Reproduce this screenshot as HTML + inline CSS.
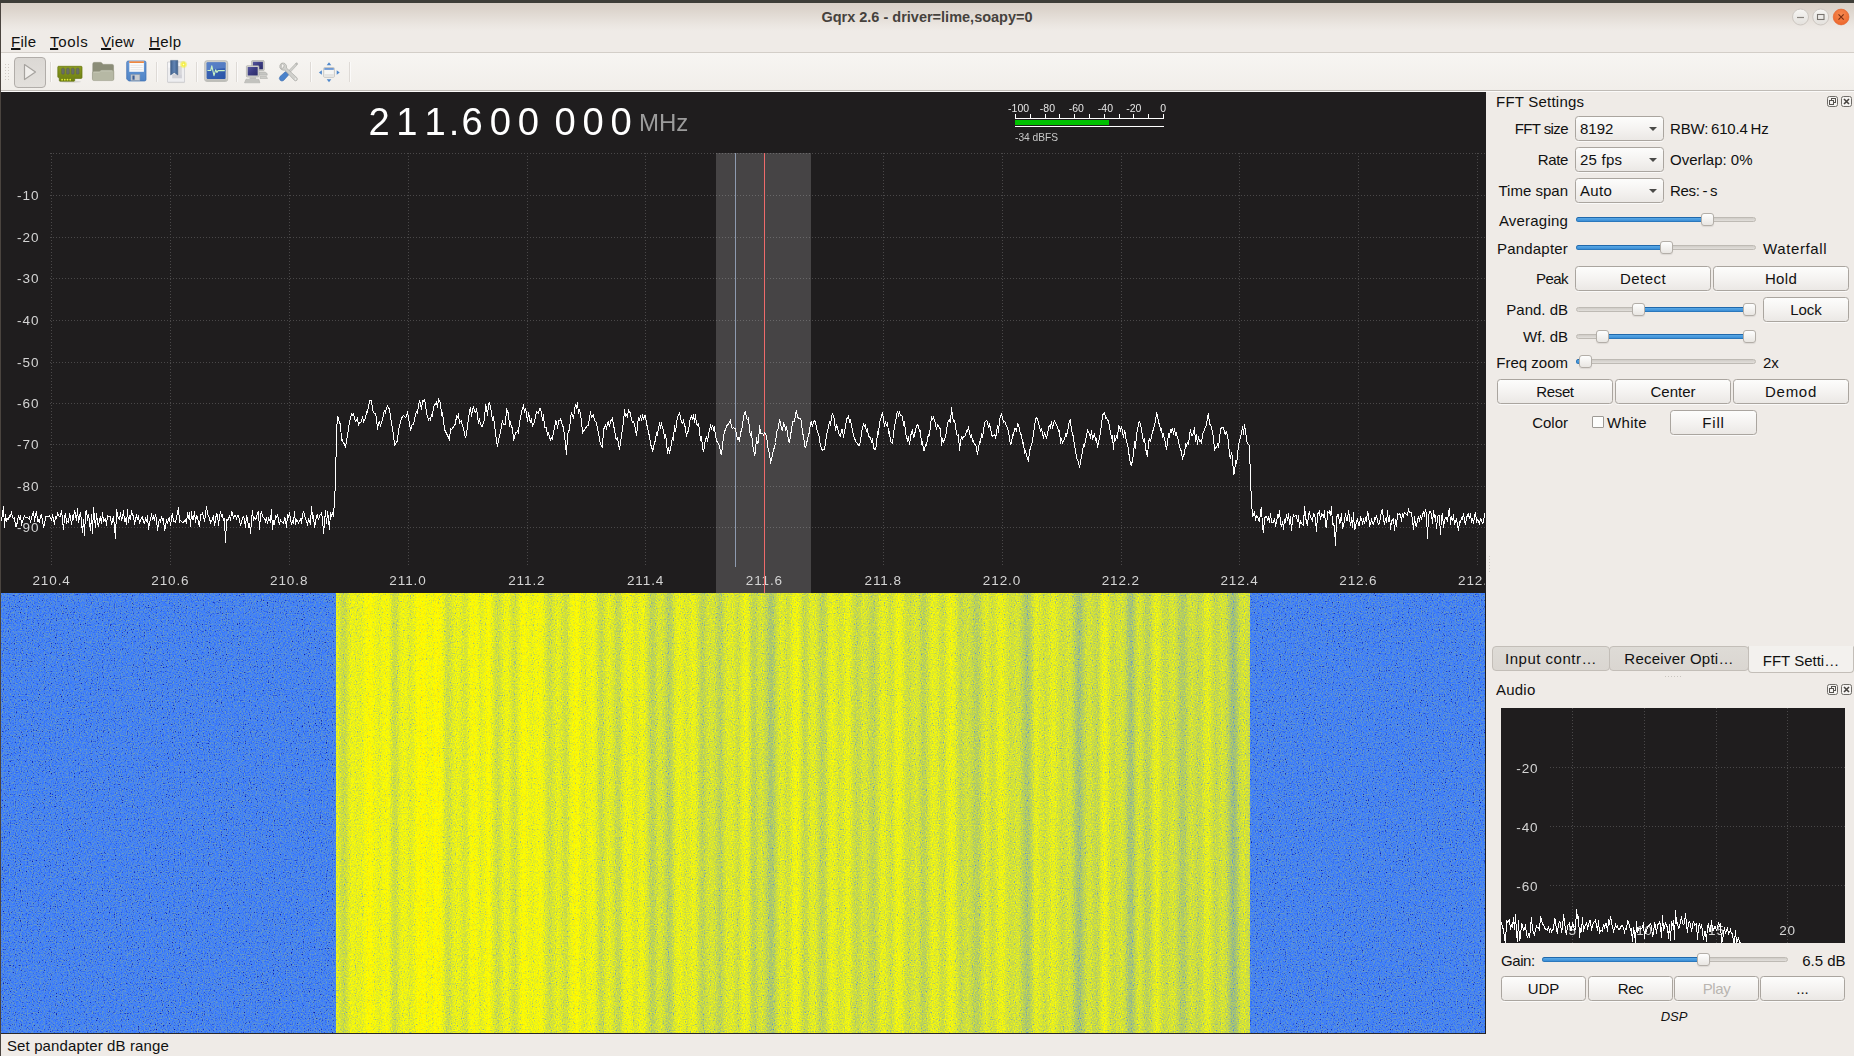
<!DOCTYPE html>
<html><head><meta charset="utf-8"><title>Gqrx 2.6 - driver=lime,soapy=0</title>
<style>
*{box-sizing:border-box;margin:0;padding:0}
html,body{width:1854px;height:1056px;overflow:hidden}
body{position:relative;background:#efebe7;font-family:"Liberation Sans",sans-serif;font-size:15px;color:#111}
.abs{position:absolute}
.t{position:absolute;white-space:nowrap;line-height:18px;height:18px}
.r{text-align:right}
.c{text-align:center}
#topstrip{left:0;top:0;width:1854px;height:3px;background:#3d3d38}
#leftedge{left:0;top:3px;width:1px;height:1053px;background:#4a443f}
#titlebar{left:1px;top:3px;width:1853px;height:28px;background:linear-gradient(#d9d0c7 0px,#dcd4cc 6px,#ebe6e1 22px,#efebe7 28px)}
#title{left:0;top:8px;width:1854px;text-align:center;font-weight:bold;font-size:14.5px;color:#46423d;line-height:18px}
#menubar{left:1px;top:31px;width:1853px;height:21px;background:#efebe7}
.menu{top:33px;font-size:15px;line-height:18px;color:#111}
.menu u{text-decoration:underline;text-decoration-thickness:1.5px;text-underline-offset:1px}
#mline{left:1px;top:52px;width:1853px;height:1px;background:#d3cec8}
#toolbar{left:1px;top:53px;width:1853px;height:37px;background:linear-gradient(#f7f5f2,#f1eeea)}
#tline1{left:1px;top:90px;width:1853px;height:1px;background:#bfbbb6}
#tline2{left:1px;top:91px;width:1853px;height:1px;background:#fbfaf9}
.sep{position:absolute;top:62px;width:1px;height:20px;background:#dedad6;border-right:1px solid #fbfaf9;box-sizing:content-box}
#playbtn{left:14px;top:57px;width:32px;height:31px;border:1px solid #b1ada9;border-radius:4px;background:linear-gradient(#dbd8d4,#e3e0dc)}
#plot{left:1px;top:92px;width:1485px;height:501px;background:#1f1d1e}
#plot svg{will-change:transform}
#wf{left:1px;top:593px;width:1485px;height:440px;background:#4080ee;overflow:hidden}
#wfline{left:1px;top:1033px;width:1485px;height:1px;background:#2a2827}
#dockedge{left:1485px;top:92px;width:1px;height:942px;background:#1f1d1e}
#status{left:7px;top:1037px;font-size:15px;letter-spacing:.12px}
.btn{position:absolute;margin-top:-1px;height:25px;border:1px solid #aaa59f;border-radius:3.5px;background:linear-gradient(#fdfdfc,#f4f2f0 55%,#ebe8e5);text-align:center;line-height:23px;font-size:15px;color:#111;box-shadow:0 1px 0 rgba(255,255,255,.7)}
.btn.dis{color:#b9b5b0}
.combo{position:absolute;height:25px;width:89px;border:1px solid #aaa59f;border-radius:3.5px;background:linear-gradient(#fdfdfc,#f4f2f0 55%,#ebe8e5);line-height:24px;font-size:15px;padding-left:4px;box-shadow:0 1px 0 rgba(255,255,255,.7)}
.combo:after{content:"";position:absolute;right:6px;top:10px;border-left:4px solid transparent;border-right:4px solid transparent;border-top:4.5px solid #4a4a48}
.groove{position:absolute;height:5px;border-radius:3px;background:linear-gradient(#d0ccc7,#e2dfdb);border:1px solid #bebab4}
.fill{position:absolute;height:5px;border-radius:3px;background:linear-gradient(#5aa9e6,#3b8ed6);border:1px solid #2b78bc;border-top-color:#2068ab}
.knob{position:absolute;width:13px;height:13px;border-radius:3px;border:1px solid #b3aea8;background:linear-gradient(#fefefe,#e9e6e2);box-shadow:0 1px 1px rgba(0,0,0,.08)}
.tab{position:absolute;height:25px;border:1px solid #c3beb8;border-radius:4px 4px 4px 4px;background:linear-gradient(#dedbd6,#dad6d1);text-align:center;line-height:24px;font-size:15px}
.tab.act{background:#f3f1ee;height:27px;border-top-color:#f3f1ee;border-radius:0 0 4px 4px}
.dockico{position:absolute;width:11px;height:11px}
</style></head><body>
<div id="topstrip" class="abs"></div>
<div id="titlebar" class="abs"></div>
<div id="title" class="abs">Gqrx 2.6 - driver=lime,soapy=0</div>
<!-- window buttons -->
<svg class="abs" style="left:1786px;top:5px" width="66" height="24" viewBox="0 0 66 24">
 <defs>
  <linearGradient id="wbg" x1="0" y1="0" x2="0" y2="1"><stop offset="0" stop-color="#f7f6f4"/><stop offset="1" stop-color="#e3e0dc"/></linearGradient>
  <radialGradient id="wbr" cx="0.5" cy="0.35" r="0.7"><stop offset="0" stop-color="#f68a52"/><stop offset="1" stop-color="#ec6428"/></radialGradient>
 </defs>
 <circle cx="14.5" cy="12" r="8" fill="url(#wbg)" stroke="#cdc7c1" stroke-width="1"/>
 <path d="M11 12.5h7" stroke="#8a8680" stroke-width="1.2"/>
 <circle cx="34.7" cy="12" r="8" fill="url(#wbg)" stroke="#cdc7c1" stroke-width="1"/>
 <rect x="31.5" y="9.5" width="6.5" height="5" fill="none" stroke="#77736e" stroke-width="1.1"/>
 <circle cx="55.1" cy="12" r="7.9" fill="url(#wbr)" stroke="#e0602a" stroke-width=".6"/>
 <path d="M52.5 9.4l5.2 5.2M57.7 9.4l-5.2 5.2" stroke="#7a2e12" stroke-width="1.2"/>
</svg>
<div id="menubar" class="abs"></div>
<div class="t menu" style="left:11px;letter-spacing:.3px"><u>F</u>ile</div>
<div class="t menu" style="left:50px;letter-spacing:.7px"><u>T</u>ools</div>
<div class="t menu" style="left:101px;letter-spacing:.3px"><u>V</u>iew</div>
<div class="t menu" style="left:149px;letter-spacing:.4px"><u>H</u>elp</div>
<div id="mline" class="abs"></div>
<div id="toolbar" class="abs"></div>
<div id="tline1" class="abs"></div><div id="tline2" class="abs"></div>
<!-- toolbar handle -->
<svg class="abs" style="left:5px;top:63px" width="6" height="20" viewBox="0 0 6 20"><g fill="#cfcac4"><rect x="0" y="1" width="1" height="1"/><rect x="3" y="1" width="1" height="1"/><rect x="0" y="4" width="1" height="1"/><rect x="3" y="4" width="1" height="1"/><rect x="0" y="7" width="1" height="1"/><rect x="3" y="7" width="1" height="1"/><rect x="0" y="10" width="1" height="1"/><rect x="3" y="10" width="1" height="1"/><rect x="0" y="13" width="1" height="1"/><rect x="3" y="13" width="1" height="1"/><rect x="0" y="16" width="1" height="1"/><rect x="3" y="16" width="1" height="1"/></g></svg>
<div id="playbtn" class="abs"></div>
<svg class="abs" style="left:22px;top:62px" width="18" height="20" viewBox="0 0 18 20"><path d="M2.5 2.5L13.5 10L2.5 17.5Z" fill="#f1efec" stroke="#a6a39f" stroke-width="1.2" stroke-linejoin="round"/></svg>
<div class="sep" style="left:50px"></div>
<div class="sep" style="left:156px"></div>
<div class="sep" style="left:196px"></div>
<div class="sep" style="left:236px"></div>
<div class="sep" style="left:310px"></div>
<div class="sep" style="left:349px"></div>
<!-- ICONS -->
<svg class="abs" style="left:0;top:53px" width="360" height="37" viewBox="0 53 360 37">
<defs>
 <linearGradient id="igreen" x1="0" y1="0" x2="0" y2="1"><stop offset="0" stop-color="#8a9a22"/><stop offset="1" stop-color="#6d7d10"/></linearGradient>
 <linearGradient id="iblue" x1="0" y1="0" x2="0" y2="1"><stop offset="0" stop-color="#6a9bd8"/><stop offset="1" stop-color="#4f84c6"/></linearGradient>
 <linearGradient id="iscr" x1="0" y1="0" x2="1" y2="1"><stop offset="0" stop-color="#3f68b8"/><stop offset="1" stop-color="#2a55a8"/></linearGradient>
 <linearGradient id="ipur" x1="0" y1="0" x2="1" y2="1"><stop offset="0" stop-color="#56569c"/><stop offset=".5" stop-color="#3a3a80"/><stop offset="1" stop-color="#2c2c68"/></linearGradient>
 <linearGradient id="irib" x1="0" y1="0" x2="1" y2="0"><stop offset="0" stop-color="#40608c"/><stop offset=".5" stop-color="#6184b4"/><stop offset="1" stop-color="#40608c"/></linearGradient>
 <radialGradient id="iglow"><stop offset="0" stop-color="#ffffd0"/><stop offset=".35" stop-color="#f6f03c"/><stop offset="1" stop-color="#f2ee30" stop-opacity=".25"/></radialGradient>
 <filter id="isoft" x="-10%" y="-10%" width="120%" height="120%"><feGaussianBlur stdDeviation="0.35"/></filter>
</defs>
<g filter="url(#isoft)">
<!-- 1 memory card -->
<ellipse cx="70" cy="81.800" rx="11" ry="1" fill="#000" opacity=".10"/>
<path d="M58.600 66.300h22.600q.8 0 .8.800v10.500q0 .8-.8.800h-6.500v2q0 .8-.8.800h-13.800q-.8 0-.8-.8v-2.800h-.7q-.8 0-.8-.8v-9.700q0-.8.800-.8z" fill="url(#igreen)" stroke="#63720c" stroke-width=".7"/>
<g fill="#6a6e66" stroke="#555a50" stroke-width=".4"><rect x="61.600" y="68.200" width="2.800" height="6" rx="1"/><rect x="66.500" y="68.200" width="2.800" height="6" rx="1"/><rect x="71.400" y="68.200" width="2.800" height="6" rx="1"/><rect x="76.300" y="68.200" width="2.800" height="6" rx="1"/></g>
<g fill="#e6f23a"><circle cx="62.100" cy="79.700" r=".85"/><circle cx="64.800" cy="79.700" r=".85"/><circle cx="67.500" cy="79.700" r=".85"/><circle cx="70.200" cy="79.700" r=".85"/></g>
<!-- 2 folder -->
<path d="M92.600 64q0-1.800 1.600-1.800h6.300q1 0 1.600.9l.8 1.100h9.300q1.500 0 1.500 1.600v12.700q0 1.600-1.500 1.600h-18q-1.600 0-1.600-1.600z" fill="#8b8d78" stroke="#75776450" stroke-width=".6"/>
<path d="M92.400 73q0-1.500 1.500-1.500h5.500q1 0 1.500-.7l.5-.6h10.900q1.500 0 1.500 1.500v7.300q0 1.600-1.500 1.600h-18.400q-1.500 0-1.500-1.600z" fill="#b6b8a4" stroke="#9a9c88" stroke-width=".5"/>
<path d="M93.500 72.200h5.800l1.600-1.300h11" stroke="#cfd1bf" stroke-width=".7" fill="none"/>
<!-- 3 floppy -->
<path d="M126.700 62.500q0-1.500 1.500-1.500h16.300q1.500 0 1.500 1.500v17q0 1.500-1.500 1.500h-15.800l-2-2z" fill="url(#iblue)" stroke="#3f6fb0" stroke-width=".7"/>
<rect x="129.300" y="61.400" width="14.600" height="10.400" fill="#fafafa"/>
<rect x="129.300" y="61.400" width="14.600" height="1.500" fill="#ee7a28"/>
<path d="M130.500 65.300h12.200M130.500 67.500h12.200M130.500 69.700h12.200" stroke="#dcdcdc" stroke-width=".6"/>
<rect x="130.900" y="74.600" width="9" height="5.900" fill="#c9ccd0" stroke="#8e99a8" stroke-width=".5"/>
<rect x="132.400" y="75.500" width="2.200" height="4.200" fill="#3d5f96"/>
<!-- 4 bookmark doc -->
<rect x="168" y="82.100" width="16.500" height="1" fill="#000" opacity=".10"/>
<path d="M167.500 62h17v20.200h-17z" fill="#eeeef0" stroke="#c6c6ca" stroke-width=".7"/>
<path d="M168.200 62.700h15.600v5h-15.600z" fill="#f8f8fa"/>
<rect x="172.200" y="74.200" width="9.700" height="4.100" fill="#d0d0d6"/>
<rect x="177.800" y="66" width="4" height="8" fill="#d6d6da"/>
<path d="M170.600 60.400h7.200v14.600l-3.600-2.600-3.600 2.600z" fill="url(#irib)" stroke="#38577f" stroke-width=".5"/>
<circle cx="183.500" cy="64.500" r="3.700" fill="url(#iglow)"/>
<!-- 5 monitor -->
<rect x="204.700" y="60.700" width="23" height="20.800" rx="2.200" fill="#d3d3cf" stroke="#b0b0ac" stroke-width=".7"/>
<rect x="205.600" y="79.200" width="21.200" height="1.800" rx=".8" fill="#bdbdb8"/>
<rect x="206.600" y="62.300" width="19" height="16.600" rx="1" fill="url(#iscr)"/>
<path d="M206.600 62.800q0-.5.500-.5h18q.5 0 .5.500v5.500q-9-.5-19 3z" fill="#6f95d4" opacity=".55"/>
<path d="M207.500 70.500h3.200l1.100-4.600 2.200 9.800 1.700-6 1.200 2.800 1.200-1.900h6.700" fill="none" stroke="#c9f2c4" stroke-width="1.100" stroke-linejoin="round"/>
<!-- 6 network computers -->
<rect x="251.600" y="60.600" width="12.600" height="10" rx=".8" fill="#cfcfcb" stroke="#a4a4a0" stroke-width=".6"/>
<rect x="252.900" y="61.800" width="10" height="7.500" fill="url(#ipur)"/>
<path d="M259.500 72h5.500l2.200 1.600v1.600h-7.700z" fill="#c6c6c2" stroke="#a4a4a0" stroke-width=".5"/>
<path d="M260 76.500h6.500l1 2h-7.500z" fill="#cdcdc9" stroke="#a9a9a5" stroke-width=".5"/>
<rect x="246.400" y="65.700" width="12.600" height="11.300" rx=".8" fill="#d6d6d2" stroke="#a4a4a0" stroke-width=".6"/>
<rect x="247.700" y="67" width="10" height="8.500" fill="url(#ipur)"/>
<path d="M249.500 77.200h6.500v1.700h-6.500z" fill="#bdbdb9"/>
<path d="M246 79.200h12.700l1.200 3.600h-15.400z" fill="#c9c9c5" stroke="#a4a4a0" stroke-width=".5"/>
<path d="M245.800 81h13.600" stroke="#b2b2ae" stroke-width=".6"/>
<!-- 7 tools -->
<path d="M296 63.200l1.400 1.400-9.800 10.500-1.600-1.600z" fill="#cfcfcb" stroke="#a0a09c" stroke-width=".5"/>
<path d="M296.800 62.300l1.200 1.200-1.200 1.800-1.800-1.800z" fill="#b8b8b4"/>
<path d="M280 76.500l5-4.500q.8-.6 1.500 0l1.800 1.800q.6.700 0 1.500l-4.500 5q-1.900 1.600-3.600 0-1.700-1.700-.2-3.800z" fill="#4b82ca" stroke="#3869ae" stroke-width=".6"/>
<path d="M281.400 63.300q-2.200 1.700-1.600 4.200.9 2.700 3.900 2.700l.9-.2 9.700 10.300q1.300 1.100 2.600 0 1.100-1.300 0-2.600l-10.300-9.600q.5-3-1.600-4.500-1.600-1-3.300-.5l2.400 2.500-.7 2.200-2.200.7z" fill="#d0d0cc" stroke="#a2a29e" stroke-width=".6"/>
<circle cx="295.500" cy="79" r=".8" fill="#f2f2f0"/>
<!-- 8 fullscreen -->
<rect x="323.700" y="67.500" width="10.700" height="9.800" rx="1" fill="#f6f6f4" stroke="#b4b4b0" stroke-width=".7"/>
<rect x="324.300" y="68" width="9.500" height="1.900" fill="#6f9ad4"/>
<path d="M324.300 74h9.500v2.700h-9.500z" fill="#e4e4e2"/>
<g fill="#4f88cc"><path d="M329 62.200l2.300 3h-4.600z"/><path d="M329 82.200l2.300-3h-4.600z"/><path d="M318.900 72.500l3-2.300v4.600z"/><path d="M339.700 72.500l-3-2.300v4.600z"/></g>
</g>
</svg>
<div id="leftedge" class="abs"></div>
<div id="plot" class="abs"><svg class="abs" style="left:0;top:0" width="1485" height="501" viewBox="0 0 1485 501"><g stroke="#4a4849" stroke-width="1" stroke-dasharray="1 2" shape-rendering="crispEdges"><path d="M50.5 61V473"/><path d="M169.5 61V473"/><path d="M288.5 61V473"/><path d="M407.5 61V473"/><path d="M526.5 61V473"/><path d="M644.5 61V473"/><path d="M763.5 61V473"/><path d="M882.5 61V473"/><path d="M1001.5 61V473"/><path d="M1120.5 61V473"/><path d="M1238.5 61V473"/><path d="M1357.5 61V473"/><path d="M1476.5 61V473"/><path d="M49 61.5H1485"/><path d="M49 103.5H1485"/><path d="M49 145.5H1485"/><path d="M49 186.5H1485"/><path d="M49 228.5H1485"/><path d="M49 270.5H1485"/><path d="M49 311.5H1485"/><path d="M49 352.5H1485"/><path d="M49 394.5H1485"/><path d="M49 435.5H1485"/></g><rect x="715" y="61" width="95" height="440" fill="#ffffff" fill-opacity="0.178"/><g fill="#d4d4d4" font-family="Liberation Sans,sans-serif" font-size="13.5px" letter-spacing="0.9px"><text x="38.3" y="108.4" text-anchor="end">-10</text><text x="38.3" y="150.4" text-anchor="end">-20</text><text x="38.3" y="191.4" text-anchor="end">-30</text><text x="38.3" y="233.4" text-anchor="end">-40</text><text x="38.3" y="275.4" text-anchor="end">-50</text><text x="38.3" y="316.4" text-anchor="end">-60</text><text x="38.3" y="357.4" text-anchor="end">-70</text><text x="38.3" y="399.4" text-anchor="end">-80</text><text x="38.3" y="440.4" text-anchor="end">-90</text><text x="50.6" y="492.9" text-anchor="middle">210.4</text><text x="169.4" y="492.9" text-anchor="middle">210.6</text><text x="288.2" y="492.9" text-anchor="middle">210.8</text><text x="407" y="492.9" text-anchor="middle">211.0</text><text x="525.8" y="492.9" text-anchor="middle">211.2</text><text x="644.6" y="492.9" text-anchor="middle">211.4</text><text x="763.4" y="492.9" text-anchor="middle">211.6</text><text x="882.2" y="492.9" text-anchor="middle">211.8</text><text x="1001" y="492.9" text-anchor="middle">212.0</text><text x="1119.8" y="492.9" text-anchor="middle">212.2</text><text x="1238.6" y="492.9" text-anchor="middle">212.4</text><text x="1357.4" y="492.9" text-anchor="middle">212.6</text><text x="1476.2" y="492.9" text-anchor="middle">212.8</text></g><path d="M734.5 61V475" stroke="#8e9bb0" stroke-width="1" shape-rendering="crispEdges"/><path d="M763.5 61V501" stroke="#ee6b6b" stroke-width="1" shape-rendering="crispEdges"/><polyline fill="none" stroke="#ffffff" stroke-width="1" shape-rendering="crispEdges" points="0.5,428.6 1.5,421.1 2.5,414.3 3.5,436.2 4.5,421.7 5.5,430.4 6.5,426.4 7.5,427.0 8.5,424.0 9.5,424.5 10.5,419.2 11.5,425.6 12.5,426.3 13.5,426.0 14.5,434.6 15.5,434.2 16.5,429.0 17.5,423.0 18.5,427.9 19.5,423.3 20.5,432.4 21.5,430.3 22.5,425.4 23.5,424.1 24.5,425.9 25.5,425.7 26.5,425.6 27.5,426.5 28.5,425.1 29.5,431.0 30.5,424.4 31.5,423.0 32.5,418.9 33.5,429.5 34.5,422.9 35.5,419.2 36.5,429.3 37.5,428.2 38.5,430.9 39.5,423.8 40.5,422.9 41.5,429.2 42.5,435.1 43.5,433.3 44.5,424.9 45.5,424.4 46.5,424.1 47.5,424.4 48.5,423.5 49.5,426.3 50.5,428.0 51.5,423.5 52.5,426.5 53.5,432.9 54.5,423.8 55.5,426.9 56.5,420.4 57.5,423.9 58.5,424.2 59.5,424.8 60.5,417.9 61.5,427.4 62.5,438.1 63.5,425.3 64.5,421.4 65.5,430.8 66.5,429.4 67.5,430.2 68.5,422.2 69.5,424.4 70.5,432.8 71.5,424.6 72.5,426.7 73.5,418.0 74.5,421.8 75.5,429.2 76.5,416.4 77.5,430.8 78.5,425.5 79.5,419.6 80.5,430.2 81.5,441.4 82.5,426.6 83.5,443.8 84.5,421.2 85.5,417.6 86.5,428.6 87.5,421.9 88.5,430.0 89.5,439.4 90.5,422.5 91.5,442.2 92.5,414.6 93.5,426.4 94.5,435.7 95.5,421.3 96.5,431.2 97.5,435.4 98.5,427.5 99.5,425.2 100.5,431.7 101.5,420.5 102.5,429.4 103.5,428.0 104.5,427.0 105.5,433.7 106.5,423.3 107.5,424.4 108.5,424.9 109.5,424.6 110.5,432.8 111.5,428.2 112.5,424.5 113.5,434.5 114.5,447.3 115.5,417.4 116.5,423.2 117.5,426.3 118.5,427.5 119.5,420.4 120.5,429.2 121.5,425.4 122.5,418.3 123.5,429.4 124.5,427.5 125.5,432.8 126.5,417.2 127.5,431.3 128.5,422.7 129.5,427.7 130.5,417.8 131.5,423.9 132.5,423.6 133.5,432.7 134.5,427.6 135.5,423.5 136.5,426.7 137.5,424.6 138.5,431.9 139.5,427.8 140.5,426.3 141.5,424.9 142.5,430.0 143.5,431.3 144.5,426.8 145.5,430.1 146.5,423.3 147.5,438.3 148.5,430.6 149.5,427.9 150.5,421.4 151.5,427.5 152.5,424.5 153.5,428.9 154.5,422.1 155.5,427.2 156.5,438.9 157.5,431.0 158.5,427.9 159.5,429.9 160.5,424.4 161.5,428.5 162.5,427.1 163.5,438.7 164.5,435.6 165.5,426.7 166.5,430.5 167.5,427.2 168.5,425.8 169.5,434.3 170.5,425.1 171.5,421.3 172.5,429.6 173.5,429.2 174.5,430.5 175.5,425.7 176.5,420.1 177.5,415.5 178.5,430.3 179.5,428.5 180.5,429.1 181.5,430.6 182.5,430.1 183.5,428.8 184.5,427.5 185.5,432.4 186.5,419.7 187.5,426.5 188.5,420.3 189.5,434.9 190.5,419.5 191.5,427.6 192.5,427.2 193.5,419.3 194.5,431.2 195.5,423.5 196.5,424.6 197.5,430.7 198.5,434.6 199.5,423.0 200.5,422.6 201.5,421.2 202.5,424.0 203.5,430.3 204.5,421.3 205.5,414.4 206.5,421.9 207.5,424.4 208.5,426.3 209.5,430.7 210.5,428.4 211.5,427.3 212.5,423.3 213.5,433.9 214.5,427.7 215.5,421.5 216.5,422.1 217.5,433.6 218.5,424.4 219.5,419.6 220.5,424.5 221.5,423.1 222.5,428.9 223.5,425.8 224.5,451.4 225.5,427.8 226.5,428.8 227.5,426.2 228.5,423.3 229.5,429.4 230.5,420.0 231.5,420.6 232.5,427.2 233.5,423.6 234.5,423.8 235.5,426.5 236.5,423.5 237.5,423.5 238.5,428.0 239.5,433.5 240.5,429.7 241.5,426.2 242.5,424.9 243.5,427.3 244.5,435.6 245.5,422.6 246.5,426.8 247.5,435.6 248.5,431.0 249.5,441.6 250.5,428.4 251.5,418.4 252.5,428.6 253.5,426.1 254.5,427.2 255.5,425.7 256.5,421.3 257.5,418.7 258.5,438.0 259.5,423.8 260.5,419.1 261.5,424.1 262.5,425.7 263.5,426.6 264.5,429.5 265.5,425.3 266.5,431.6 267.5,425.9 268.5,428.1 269.5,429.9 270.5,416.9 271.5,438.1 272.5,427.9 273.5,433.0 274.5,424.1 275.5,425.3 276.5,422.0 277.5,428.7 278.5,433.2 279.5,427.7 280.5,429.5 281.5,430.9 282.5,431.4 283.5,426.0 284.5,427.3 285.5,435.8 286.5,423.3 287.5,425.1 288.5,420.4 289.5,428.1 290.5,432.0 291.5,429.1 292.5,431.6 293.5,419.5 294.5,432.9 295.5,428.0 296.5,428.4 297.5,430.8 298.5,429.7 299.5,426.0 300.5,431.8 301.5,421.7 302.5,420.2 303.5,421.7 304.5,428.0 305.5,428.1 306.5,434.0 307.5,426.1 308.5,430.6 309.5,431.9 310.5,414.4 311.5,425.8 312.5,424.1 313.5,436.2 314.5,430.8 315.5,424.3 316.5,422.7 317.5,428.3 318.5,424.2 319.5,422.3 320.5,421.2 321.5,427.1 322.5,441.5 323.5,430.4 324.5,417.9 325.5,432.4 326.5,419.5 327.5,427.1 328.5,437.9 329.5,419.8 330.5,423.6 331.5,421.4 332.5,424.5 333.5,407.8 334.5,390.1 335.5,340.9 336.5,323.7 337.5,326.3 338.5,331.6 339.5,331.7 340.5,348.7 341.5,347.7 342.5,351.9 343.5,351.5 344.5,355.6 345.5,349.0 346.5,342.4 347.5,338.1 348.5,328.7 349.5,326.7 350.5,321.8 351.5,323.4 352.5,321.8 353.5,325.7 354.5,329.3 355.5,327.6 356.5,326.3 357.5,332.8 358.5,330.7 359.5,330.7 360.5,329.4 361.5,324.5 362.5,330.1 363.5,328.3 364.5,326.2 365.5,319.6 366.5,320.0 367.5,315.1 368.5,308.6 369.5,308.4 370.5,308.5 371.5,316.8 372.5,320.2 373.5,321.3 374.5,321.9 375.5,326.1 376.5,338.3 377.5,330.5 378.5,329.4 379.5,334.7 380.5,329.8 381.5,328.8 382.5,321.1 383.5,319.2 384.5,320.9 385.5,315.4 386.5,314.2 387.5,316.2 388.5,317.0 389.5,324.0 390.5,331.7 391.5,337.0 392.5,342.7 393.5,353.7 394.5,351.4 395.5,350.2 396.5,349.0 397.5,337.5 398.5,334.9 399.5,330.1 400.5,326.6 401.5,324.6 402.5,323.7 403.5,324.4 404.5,325.3 405.5,324.4 406.5,319.4 407.5,327.1 408.5,330.0 409.5,339.4 410.5,333.9 411.5,333.5 412.5,331.7 413.5,327.7 414.5,322.3 415.5,320.0 416.5,321.3 417.5,313.8 418.5,308.9 419.5,311.3 420.5,317.5 421.5,308.6 422.5,309.4 423.5,307.9 424.5,312.1 425.5,322.4 426.5,324.0 427.5,328.2 428.5,326.5 429.5,327.8 430.5,322.7 431.5,324.3 432.5,314.3 433.5,313.1 434.5,312.5 435.5,309.5 436.5,315.8 437.5,307.2 438.5,309.6 439.5,310.3 440.5,323.5 441.5,321.3 442.5,328.3 443.5,338.0 444.5,338.5 445.5,342.4 446.5,342.8 447.5,346.2 448.5,347.9 449.5,337.0 450.5,337.8 451.5,335.6 452.5,335.3 453.5,333.1 454.5,331.7 455.5,323.6 456.5,324.9 457.5,322.6 458.5,330.7 459.5,329.2 460.5,329.0 461.5,334.5 462.5,335.4 463.5,342.2 464.5,345.0 465.5,342.4 466.5,333.8 467.5,327.3 468.5,319.7 469.5,315.1 470.5,324.9 471.5,318.1 472.5,314.6 473.5,319.0 474.5,320.5 475.5,317.4 476.5,322.3 477.5,332.4 478.5,328.2 479.5,331.6 480.5,334.8 481.5,334.1 482.5,330.7 483.5,327.7 484.5,312.9 485.5,315.0 486.5,323.9 487.5,311.6 488.5,310.7 489.5,315.5 490.5,320.1 491.5,328.9 492.5,323.6 493.5,333.6 494.5,341.0 495.5,349.0 496.5,354.7 497.5,347.3 498.5,344.6 499.5,339.5 500.5,333.8 501.5,328.6 502.5,332.9 503.5,332.7 504.5,332.9 505.5,316.5 506.5,320.0 507.5,320.7 508.5,334.5 509.5,329.5 510.5,335.6 511.5,335.8 512.5,348.1 513.5,346.1 514.5,340.6 515.5,340.5 516.5,339.2 517.5,340.7 518.5,329.1 519.5,327.3 520.5,318.9 521.5,317.6 522.5,312.4 523.5,320.9 524.5,316.1 525.5,321.6 526.5,329.7 527.5,319.8 528.5,326.3 529.5,331.0 530.5,326.1 531.5,335.2 532.5,331.5 533.5,330.0 534.5,324.8 535.5,319.3 536.5,320.3 537.5,321.5 538.5,316.5 539.5,316.5 540.5,320.7 541.5,328.5 542.5,322.4 543.5,335.6 544.5,335.2 545.5,336.1 546.5,343.8 547.5,340.5 548.5,346.2 549.5,347.7 550.5,345.6 551.5,346.8 552.5,339.1 553.5,337.1 554.5,329.0 555.5,329.6 556.5,336.5 557.5,328.9 558.5,329.0 559.5,327.2 560.5,329.8 561.5,334.3 562.5,335.1 563.5,345.1 564.5,351.6 565.5,363.4 566.5,343.1 567.5,339.3 568.5,337.6 569.5,326.2 570.5,320.7 571.5,322.7 572.5,327.3 573.5,318.0 574.5,313.0 575.5,315.4 576.5,310.4 577.5,322.3 578.5,317.3 579.5,322.9 580.5,329.4 581.5,340.7 582.5,339.0 583.5,338.2 584.5,335.3 585.5,335.2 586.5,333.1 587.5,333.4 588.5,324.4 589.5,321.1 590.5,325.1 591.5,325.0 592.5,322.2 593.5,328.6 594.5,329.6 595.5,330.6 596.5,336.8 597.5,340.5 598.5,348.1 599.5,351.9 600.5,354.1 601.5,355.5 602.5,337.0 603.5,336.1 604.5,332.5 605.5,337.5 606.5,330.7 607.5,329.9 608.5,335.3 609.5,328.5 610.5,328.8 611.5,325.6 612.5,335.0 613.5,335.9 614.5,346.1 615.5,347.3 616.5,346.0 617.5,351.2 618.5,357.7 619.5,349.8 620.5,344.3 621.5,335.1 622.5,331.8 623.5,317.1 624.5,324.2 625.5,322.9 626.5,324.9 627.5,317.2 628.5,320.5 629.5,321.0 630.5,328.5 631.5,330.0 632.5,329.8 633.5,331.5 634.5,337.8 635.5,343.9 636.5,334.2 637.5,325.1 638.5,328.4 639.5,323.1 640.5,329.0 641.5,322.4 642.5,327.9 643.5,323.9 644.5,323.4 645.5,333.1 646.5,334.2 647.5,342.3 648.5,343.1 649.5,353.6 650.5,353.3 651.5,359.5 652.5,356.0 653.5,350.8 654.5,348.2 655.5,340.7 656.5,342.8 657.5,336.2 658.5,332.1 659.5,335.2 660.5,332.0 661.5,336.1 662.5,337.3 663.5,346.7 664.5,341.6 665.5,349.4 666.5,362.3 667.5,355.3 668.5,360.2 669.5,357.6 670.5,350.2 671.5,346.4 672.5,348.1 673.5,333.3 674.5,340.2 675.5,331.2 676.5,325.1 677.5,323.3 678.5,320.1 679.5,326.3 680.5,329.6 681.5,331.3 682.5,328.3 683.5,333.1 684.5,335.7 685.5,345.2 686.5,339.8 687.5,339.7 688.5,330.4 689.5,325.8 690.5,324.2 691.5,328.0 692.5,322.1 693.5,330.7 694.5,322.2 695.5,332.8 696.5,333.3 697.5,331.6 698.5,339.1 699.5,349.3 700.5,344.0 701.5,354.7 702.5,360.4 703.5,353.5 704.5,347.5 705.5,343.7 706.5,349.6 707.5,343.1 708.5,337.5 709.5,334.0 710.5,337.6 711.5,332.9 712.5,337.5 713.5,335.5 714.5,343.9 715.5,348.4 716.5,350.6 717.5,351.5 718.5,354.4 719.5,360.2 720.5,362.7 721.5,352.8 722.5,346.2 723.5,338.5 724.5,338.6 725.5,333.9 726.5,333.6 727.5,331.7 728.5,330.2 729.5,327.3 730.5,335.9 731.5,336.3 732.5,335.3 733.5,336.3 734.5,336.7 735.5,343.3 736.5,347.4 737.5,346.1 738.5,348.7 739.5,341.9 740.5,337.3 741.5,334.4 742.5,325.0 743.5,321.6 744.5,318.7 745.5,326.4 746.5,327.3 747.5,326.2 748.5,336.8 749.5,344.4 750.5,338.9 751.5,352.3 752.5,357.2 753.5,363.5 754.5,359.8 755.5,345.4 756.5,351.6 757.5,350.8 758.5,333.0 759.5,341.3 760.5,341.7 761.5,341.3 762.5,343.0 763.5,340.7 764.5,341.8 765.5,344.1 766.5,351.2 767.5,359.9 768.5,360.1 769.5,371.5 770.5,366.1 771.5,363.7 772.5,356.6 773.5,356.0 774.5,350.5 775.5,341.3 776.5,337.6 777.5,335.8 778.5,327.3 779.5,330.4 780.5,337.2 781.5,338.3 782.5,331.2 783.5,332.4 784.5,337.6 785.5,335.2 786.5,340.8 787.5,349.1 788.5,350.5 789.5,343.2 790.5,338.1 791.5,329.4 792.5,329.1 793.5,329.7 794.5,321.8 795.5,319.3 796.5,324.5 797.5,326.4 798.5,326.6 799.5,326.7 800.5,329.7 801.5,342.6 802.5,342.8 803.5,352.7 804.5,356.3 805.5,351.8 806.5,347.2 807.5,342.9 808.5,340.2 809.5,330.3 810.5,330.0 811.5,335.2 812.5,329.7 813.5,328.5 814.5,330.6 815.5,334.9 816.5,340.6 817.5,341.2 818.5,347.4 819.5,353.4 820.5,357.0 821.5,358.2 822.5,357.1 823.5,357.6 824.5,350.6 825.5,343.6 826.5,339.2 827.5,334.4 828.5,329.5 829.5,333.9 830.5,324.9 831.5,321.9 832.5,324.5 833.5,328.2 834.5,338.8 835.5,333.3 836.5,335.4 837.5,340.3 838.5,343.0 839.5,344.0 840.5,337.3 841.5,337.1 842.5,346.0 843.5,338.0 844.5,335.4 845.5,326.6 846.5,326.9 847.5,323.1 848.5,330.8 849.5,328.1 850.5,333.4 851.5,338.3 852.5,343.8 853.5,346.3 854.5,348.6 855.5,350.7 856.5,351.6 857.5,353.6 858.5,353.0 859.5,349.1 860.5,340.4 861.5,336.6 862.5,332.2 863.5,334.5 864.5,333.0 865.5,340.0 866.5,335.9 867.5,344.9 868.5,345.0 869.5,346.3 870.5,349.3 871.5,346.5 872.5,355.4 873.5,357.5 874.5,357.2 875.5,352.5 876.5,340.5 877.5,342.4 878.5,329.9 879.5,328.6 880.5,323.5 881.5,321.1 882.5,326.7 883.5,335.1 884.5,329.2 885.5,334.3 886.5,329.7 887.5,340.8 888.5,339.4 889.5,349.6 890.5,350.4 891.5,351.0 892.5,342.3 893.5,334.8 894.5,329.3 895.5,324.4 896.5,318.7 897.5,323.7 898.5,320.6 899.5,323.9 900.5,323.8 901.5,324.8 902.5,333.9 903.5,328.8 904.5,341.1 905.5,345.5 906.5,348.5 907.5,343.9 908.5,353.0 909.5,344.5 910.5,340.6 911.5,336.8 912.5,346.0 913.5,343.3 914.5,338.0 915.5,334.2 916.5,333.1 917.5,333.8 918.5,339.7 919.5,338.7 920.5,352.2 921.5,350.1 922.5,358.5 923.5,358.2 924.5,352.5 925.5,353.1 926.5,346.8 927.5,342.2 928.5,343.1 929.5,333.8 930.5,324.9 931.5,326.7 932.5,324.9 933.5,329.2 934.5,330.8 935.5,338.0 936.5,332.9 937.5,334.3 938.5,336.0 939.5,336.5 940.5,353.6 941.5,346.4 942.5,350.5 943.5,346.5 944.5,345.3 945.5,338.7 946.5,332.1 947.5,328.1 948.5,327.8 949.5,331.4 950.5,314.6 951.5,324.4 952.5,329.3 953.5,328.8 954.5,332.6 955.5,342.7 956.5,343.6 957.5,342.7 958.5,358.8 959.5,349.6 960.5,343.8 961.5,346.8 962.5,344.6 963.5,344.3 964.5,343.5 965.5,338.7 966.5,339.1 967.5,334.4 968.5,340.5 969.5,345.8 970.5,342.1 971.5,349.2 972.5,349.0 973.5,352.3 974.5,352.5 975.5,356.2 976.5,362.8 977.5,355.5 978.5,350.0 979.5,350.2 980.5,341.5 981.5,345.9 982.5,339.2 983.5,331.3 984.5,329.5 985.5,328.5 986.5,329.5 987.5,336.4 988.5,332.7 989.5,335.1 990.5,343.2 991.5,344.1 992.5,343.5 993.5,342.9 994.5,345.7 995.5,341.6 996.5,333.0 997.5,340.6 998.5,327.8 999.5,325.0 1000.5,322.3 1001.5,325.8 1002.5,330.3 1003.5,329.4 1004.5,331.0 1005.5,334.1 1006.5,336.0 1007.5,339.2 1008.5,347.3 1009.5,352.3 1010.5,350.6 1011.5,342.8 1012.5,343.4 1013.5,336.6 1014.5,336.4 1015.5,339.8 1016.5,331.5 1017.5,332.5 1018.5,337.8 1019.5,341.6 1020.5,343.4 1021.5,351.2 1022.5,350.9 1023.5,360.7 1024.5,359.3 1025.5,362.7 1026.5,367.4 1027.5,368.9 1028.5,359.9 1029.5,355.2 1030.5,352.6 1031.5,348.8 1032.5,340.9 1033.5,334.6 1034.5,327.4 1035.5,325.7 1036.5,326.7 1037.5,331.5 1038.5,334.7 1039.5,339.2 1040.5,337.3 1041.5,340.6 1042.5,346.7 1043.5,339.7 1044.5,344.5 1045.5,345.9 1046.5,341.9 1047.5,335.5 1048.5,333.7 1049.5,335.6 1050.5,328.7 1051.5,336.6 1052.5,331.4 1053.5,329.3 1054.5,331.4 1055.5,332.7 1056.5,335.1 1057.5,339.5 1058.5,339.0 1059.5,351.5 1060.5,345.6 1061.5,352.1 1062.5,348.2 1063.5,347.5 1064.5,341.9 1065.5,343.9 1066.5,339.3 1067.5,334.3 1068.5,328.3 1069.5,327.8 1070.5,338.9 1071.5,341.6 1072.5,345.4 1073.5,354.2 1074.5,357.8 1075.5,366.8 1076.5,367.8 1077.5,370.9 1078.5,375.6 1079.5,370.8 1080.5,363.5 1081.5,360.4 1082.5,352.6 1083.5,353.8 1084.5,347.6 1085.5,344.3 1086.5,336.9 1087.5,340.7 1088.5,341.2 1089.5,347.4 1090.5,337.7 1091.5,348.0 1092.5,344.7 1093.5,342.2 1094.5,348.0 1095.5,346.5 1096.5,355.9 1097.5,351.1 1098.5,345.7 1099.5,340.1 1100.5,332.9 1101.5,322.9 1102.5,322.9 1103.5,319.8 1104.5,326.6 1105.5,325.5 1106.5,328.5 1107.5,328.6 1108.5,336.0 1109.5,339.2 1110.5,346.8 1111.5,343.1 1112.5,357.8 1113.5,343.5 1114.5,349.0 1115.5,343.9 1116.5,346.0 1117.5,333.6 1118.5,335.0 1119.5,339.5 1120.5,333.6 1121.5,339.7 1122.5,345.7 1123.5,338.1 1124.5,342.7 1125.5,350.4 1126.5,351.7 1127.5,357.9 1128.5,366.7 1129.5,371.3 1130.5,374.3 1131.5,367.0 1132.5,363.1 1133.5,349.3 1134.5,357.3 1135.5,341.8 1136.5,338.2 1137.5,331.2 1138.5,330.0 1139.5,331.7 1140.5,337.7 1141.5,344.2 1142.5,349.9 1143.5,346.0 1144.5,356.1 1145.5,360.7 1146.5,365.0 1147.5,350.8 1148.5,346.4 1149.5,350.2 1150.5,344.7 1151.5,339.5 1152.5,337.8 1153.5,332.6 1154.5,329.6 1155.5,320.3 1156.5,323.7 1157.5,330.8 1158.5,332.4 1159.5,338.0 1160.5,337.1 1161.5,344.8 1162.5,342.6 1163.5,346.8 1164.5,351.6 1165.5,357.5 1166.5,350.3 1167.5,341.4 1168.5,346.2 1169.5,336.7 1170.5,339.4 1171.5,335.7 1172.5,342.6 1173.5,336.3 1174.5,343.6 1175.5,340.6 1176.5,346.7 1177.5,347.8 1178.5,355.2 1179.5,357.3 1180.5,359.8 1181.5,367.8 1182.5,362.3 1183.5,362.5 1184.5,351.2 1185.5,354.7 1186.5,349.7 1187.5,353.1 1188.5,343.0 1189.5,337.3 1190.5,343.8 1191.5,343.0 1192.5,341.6 1193.5,335.2 1194.5,349.8 1195.5,341.9 1196.5,353.2 1197.5,343.6 1198.5,349.7 1199.5,348.6 1200.5,350.5 1201.5,343.1 1202.5,339.7 1203.5,338.0 1204.5,334.5 1205.5,333.3 1206.5,324.2 1207.5,321.6 1208.5,332.4 1209.5,332.6 1210.5,335.8 1211.5,339.5 1212.5,346.6 1213.5,357.7 1214.5,355.5 1215.5,355.3 1216.5,352.4 1217.5,354.7 1218.5,347.6 1219.5,336.8 1220.5,336.1 1221.5,335.1 1222.5,335.3 1223.5,341.0 1224.5,342.0 1225.5,338.8 1226.5,344.5 1227.5,349.9 1228.5,363.0 1229.5,366.5 1230.5,360.2 1231.5,365.7 1232.5,382.5 1233.5,381.5 1234.5,368.1 1235.5,371.7 1236.5,364.8 1237.5,352.4 1238.5,350.3 1239.5,343.9 1240.5,342.7 1241.5,333.9 1242.5,342.5 1243.5,332.4 1244.5,339.6 1245.5,347.1 1246.5,351.9 1247.5,352.1 1248.5,354.6 1249.5,388.0 1250.5,409.8 1251.5,424.4 1252.5,423.2 1253.5,418.7 1254.5,429.2 1255.5,423.4 1256.5,424.4 1257.5,427.6 1258.5,429.1 1259.5,420.4 1260.5,414.7 1261.5,435.5 1262.5,441.1 1263.5,426.4 1264.5,424.6 1265.5,424.2 1266.5,427.6 1267.5,423.9 1268.5,431.4 1269.5,420.7 1270.5,430.6 1271.5,430.2 1272.5,430.4 1273.5,425.9 1274.5,434.7 1275.5,429.8 1276.5,423.5 1277.5,426.2 1278.5,418.3 1279.5,430.9 1280.5,434.6 1281.5,429.3 1282.5,437.5 1283.5,427.3 1284.5,430.6 1285.5,421.6 1286.5,428.8 1287.5,420.7 1288.5,433.1 1289.5,424.2 1290.5,438.8 1291.5,427.2 1292.5,423.0 1293.5,424.6 1294.5,423.1 1295.5,423.7 1296.5,429.9 1297.5,423.4 1298.5,435.9 1299.5,428.6 1300.5,431.6 1301.5,432.8 1302.5,433.4 1303.5,414.2 1304.5,424.1 1305.5,430.7 1306.5,433.9 1307.5,422.8 1308.5,419.5 1309.5,425.5 1310.5,426.5 1311.5,428.9 1312.5,420.9 1313.5,423.6 1314.5,426.9 1315.5,440.0 1316.5,422.1 1317.5,421.0 1318.5,418.9 1319.5,428.0 1320.5,421.6 1321.5,422.1 1322.5,425.5 1323.5,418.4 1324.5,433.3 1325.5,436.4 1326.5,419.8 1327.5,420.5 1328.5,419.2 1329.5,424.1 1330.5,414.4 1331.5,432.1 1332.5,431.6 1333.5,435.3 1334.5,454.2 1335.5,426.3 1336.5,422.7 1337.5,422.1 1338.5,431.0 1339.5,430.4 1340.5,420.8 1341.5,437.4 1342.5,433.2 1343.5,428.4 1344.5,421.5 1345.5,428.3 1346.5,428.9 1347.5,417.6 1348.5,426.1 1349.5,434.2 1350.5,425.4 1351.5,436.4 1352.5,420.2 1353.5,438.3 1354.5,435.0 1355.5,429.3 1356.5,426.9 1357.5,433.3 1358.5,433.4 1359.5,424.9 1360.5,426.6 1361.5,431.1 1362.5,428.1 1363.5,431.8 1364.5,426.5 1365.5,429.5 1366.5,419.2 1367.5,422.0 1368.5,434.0 1369.5,431.9 1370.5,427.6 1371.5,430.0 1372.5,433.3 1373.5,426.1 1374.5,427.1 1375.5,422.6 1376.5,428.9 1377.5,432.2 1378.5,431.5 1379.5,424.4 1380.5,420.2 1381.5,416.8 1382.5,429.0 1383.5,431.7 1384.5,426.2 1385.5,431.4 1386.5,418.5 1387.5,430.3 1388.5,422.7 1389.5,437.9 1390.5,428.9 1391.5,428.7 1392.5,425.8 1393.5,438.8 1394.5,427.2 1395.5,434.9 1396.5,421.4 1397.5,422.6 1398.5,421.7 1399.5,423.1 1400.5,429.7 1401.5,421.1 1402.5,424.0 1403.5,420.4 1404.5,421.5 1405.5,422.2 1406.5,422.9 1407.5,416.5 1408.5,420.6 1409.5,420.1 1410.5,421.1 1411.5,428.0 1412.5,438.0 1413.5,424.2 1414.5,433.3 1415.5,434.5 1416.5,427.7 1417.5,425.0 1418.5,427.9 1419.5,423.6 1420.5,428.0 1421.5,422.5 1422.5,420.5 1423.5,423.1 1424.5,417.1 1425.5,422.1 1426.5,447.0 1427.5,424.2 1428.5,419.5 1429.5,419.2 1430.5,422.4 1431.5,431.6 1432.5,418.2 1433.5,425.0 1434.5,423.9 1435.5,436.7 1436.5,425.0 1437.5,423.4 1438.5,423.9 1439.5,442.5 1440.5,425.1 1441.5,421.2 1442.5,436.2 1443.5,428.6 1444.5,425.9 1445.5,425.9 1446.5,430.2 1447.5,420.4 1448.5,415.6 1449.5,432.8 1450.5,424.1 1451.5,429.3 1452.5,422.5 1453.5,433.3 1454.5,429.3 1455.5,427.3 1456.5,432.3 1457.5,438.9 1458.5,430.0 1459.5,430.8 1460.5,425.5 1461.5,427.1 1462.5,420.6 1463.5,428.9 1464.5,432.6 1465.5,426.3 1466.5,422.9 1467.5,422.1 1468.5,426.8 1469.5,420.6 1470.5,431.4 1471.5,426.5 1472.5,432.1 1473.5,424.0 1474.5,420.2 1475.5,430.2 1476.5,428.0 1477.5,429.0 1478.5,433.2 1479.5,426.1 1480.5,428.9 1481.5,431.4 1482.5,430.1 1483.5,421.7 1484.5,422.0"/><g font-family="Liberation Sans,sans-serif" fill="#ffffff" font-size="38.2px"><text x="378" y="43.3" text-anchor="middle">2</text><text x="405.95" y="43.3" text-anchor="middle">1</text><text x="434.05" y="43.3" text-anchor="middle">1</text><text x="452.95" y="43.3" text-anchor="middle">.</text><text x="471" y="43.3" text-anchor="middle">6</text><text x="499.45" y="43.3" text-anchor="middle">0</text><text x="527.45" y="43.3" text-anchor="middle">0</text><text x="564.1" y="43.3" text-anchor="middle">0</text><text x="592.15" y="43.3" text-anchor="middle">0</text><text x="620.15" y="43.3" text-anchor="middle">0</text></g><text x="638" y="39" font-family="Liberation Sans,sans-serif" font-size="24px" fill="#9c9c9c">MHz</text><g stroke="#ffffff" stroke-width="1" shape-rendering="crispEdges"><path d="M1014 26.5H1163"/><path d="M1014.5 22V27"/><path d="M1029.5 22V27"/><path d="M1044.5 22V27"/><path d="M1058.5 22V27"/><path d="M1073.5 22V27"/><path d="M1088.5 22V27"/><path d="M1103.5 22V27"/><path d="M1118.5 22V27"/><path d="M1132.5 22V27"/><path d="M1147.5 22V27"/><path d="M1162.5 22V27"/><path d="M1014 34.5H1163"/></g><rect x="1014" y="28" width="94" height="5" fill="#00c000"/><g fill="#e6e6e6" font-family="Liberation Sans,sans-serif" font-size="10.5px"><text x="1017.6" y="20" text-anchor="middle">-100</text><text x="1046.4" y="20" text-anchor="middle">-80</text><text x="1075.3" y="20" text-anchor="middle">-60</text><text x="1104.4" y="20" text-anchor="middle">-40</text><text x="1132.8" y="20" text-anchor="middle">-20</text><text x="1162.2" y="20" text-anchor="middle">0</text><text x="1014" y="49" fill="#c8c8c8" font-size="10.2px">-34 dBFS</text></g></svg></div>
<div id="wf" class="abs" style="background:linear-gradient(90deg,#4382f5 0px,#dfea29 335px,#d0df3e 339px,#c0d552 343px,#d4e239 347px,#e7ef1f 351px,#e3ec24 355px,#dfea29 359px,#e7ef1f 363px,#fbfc06 367px,#f7f90b 371px,#e7ef1f 375px,#dfea29 379px,#eff415 383px,#f3f710 387px,#d4e239 391px,#c4d84d 395px,#dfea29 399px,#ebf21a 403px,#dfea29 407px,#dbe72e 411px,#eff415 415px,#fbfc06 419px,#fbfc06 423px,#ebf21a 427px,#eff415 431px,#fbfc06 435px,#fbfc06 439px,#dbe72e 443px,#c8da48 447px,#d8e533 451px,#e3ec24 455px,#e3ec24 459px,#d4e239 463px,#dfea29 467px,#f7f90b 471px,#f3f710 475px,#dfea29 479px,#e7ef1f 483px,#f7f90b 487px,#e7ef1f 491px,#c8da48 495px,#d0df3e 499px,#e3ec24 503px,#e7ef1f 507px,#d4e239 511px,#d0df3e 515px,#ebf21a 519px,#f7f90b 523px,#ebf21a 527px,#e3ec24 531px,#eff415 535px,#f3f710 539px,#dfea29 543px,#ccdd43 547px,#ccdd43 551px,#dbe72e 555px,#dfea29 559px,#ccdd43 563px,#d0df3e 567px,#ebf21a 571px,#f7f90b 575px,#ebf21a 579px,#dbe72e 583px,#e3ec24 587px,#ebf21a 591px,#dbe72e 595px,#c0d552 599px,#d0df3e 603px,#dfea29 607px,#dbe72e 611px,#c4d84d 615px,#c4d84d 619px,#dfea29 623px,#ebf21a 627px,#dfea29 631px,#d4e239 635px,#e7ef1f 639px,#e3ec24 643px,#ccdd43 647px,#b8d05c 651px,#c4d84d 655px,#d4e239 659px,#c8da48 663px,#b4cd61 667px,#c0d552 671px,#dfea29 675px,#e7ef1f 679px,#d8e533 683px,#d8e533 687px,#e3ec24 691px,#dbe72e 695px,#c0d552 699px,#b8d05c 703px,#d0df3e 707px,#d0df3e 711px,#c4d84d 715px,#b1cb66 719px,#ccdd43 723px,#dbe72e 727px,#d8e533 731px,#ccdd43 735px,#ccdd43 739px,#e7ef1f 743px,#dfea29 747px,#c0d552 751px,#c0d552 755px,#d0df3e 759px,#c8da48 763px,#b1cb66 767px,#a9c571 771px,#c4d84d 775px,#dbe72e 779px,#d8e533 783px,#ccdd43 787px,#dfea29 791px,#eff415 795px,#dbe72e 799px,#c0d552 803px,#ccdd43 807px,#dfea29 811px,#d8e533 815px,#bcd257 819px,#bcd257 823px,#d4e239 827px,#e3ec24 831px,#d8e533 835px,#d0df3e 839px,#d8e533 843px,#e3ec24 847px,#d4e239 851px,#c0d552 855px,#c4d84d 859px,#d4e239 863px,#ccdd43 867px,#bcd257 871px,#c4d84d 875px,#dbe72e 879px,#dfea29 883px,#d0df3e 887px,#ccdd43 891px,#e3ec24 895px,#e7ef1f 899px,#d4e239 903px,#c4d84d 907px,#ccdd43 911px,#d8e533 915px,#c4d84d 919px,#b8d05c 923px,#ccdd43 927px,#dfea29 931px,#dfea29 935px,#d0df3e 939px,#c8da48 943px,#dfea29 947px,#ebf21a 951px,#d4e239 955px,#c0d552 959px,#c4d84d 963px,#ccdd43 967px,#c0d552 971px,#b1cb66 975px,#c0d552 979px,#d8e533 983px,#d8e533 987px,#c8da48 991px,#d4e239 995px,#e3ec24 999px,#dfea29 1003px,#d0df3e 1007px,#c8da48 1011px,#d0df3e 1015px,#ccdd43 1019px,#b1cb66 1023px,#a5c376 1027px,#c4d84d 1031px,#dfea29 1035px,#d8e533 1039px,#ccdd43 1043px,#d0df3e 1047px,#dfea29 1051px,#d8e533 1055px,#c8da48 1059px,#c8da48 1063px,#d4e239 1067px,#c8da48 1071px,#a9c571 1075px,#a1c07b 1079px,#b8d05c 1083px,#d0df3e 1087px,#ccdd43 1091px,#bcd257 1095px,#d0df3e 1099px,#e7ef1f 1103px,#dbe72e 1107px,#c4d84d 1111px,#c8da48 1115px,#d4e239 1119px,#c8da48 1123px,#adc86c 1127px,#a1c07b 1131px,#c4d84d 1135px,#d4e239 1139px,#c0d552 1143px,#b4cd61 1147px,#c8da48 1151px,#e3ec24 1155px,#d4e239 1159px,#c0d552 1163px,#c8da48 1167px,#d4e239 1171px,#c8da48 1175px,#b1cb66 1179px,#adc86c 1183px,#c4d84d 1187px,#ccdd43 1191px,#c4d84d 1195px,#c0d552 1199px,#d4e239 1203px,#dfea29 1207px,#ccdd43 1211px,#bcd257 1215px,#ccdd43 1219px,#d0df3e 1223px,#bcd257 1227px,#99bb85 1231px,#a1c07b 1235px,#c4d84d 1239px,#d0df3e 1243px,#c4d84d 1247px,#4382f5 1249px)"><svg class="abs" style="left:0;top:0" width="1485" height="440" viewBox="0 0 1485 440"><defs><linearGradient id="wg" x1="0" y1="0" x2="1" y2="0"><stop offset="0.0000" stop-color="rgb(103.0,103.0,103.0)"/><stop offset="0.2256" stop-color="rgb(103.0,103.0,103.0)"/><stop offset="0.2256" stop-color="rgb(143.5,143.5,143.5)"/><stop offset="0.2269" stop-color="rgb(142.5,142.5,142.5)"/><stop offset="0.2283" stop-color="rgb(139.9,139.9,139.9)"/><stop offset="0.2296" stop-color="rgb(136.9,136.9,136.9)"/><stop offset="0.2310" stop-color="rgb(135.6,135.6,135.6)"/><stop offset="0.2323" stop-color="rgb(137.3,137.3,137.3)"/><stop offset="0.2337" stop-color="rgb(140.9,140.9,140.9)"/><stop offset="0.2350" stop-color="rgb(144.2,144.2,144.2)"/><stop offset="0.2364" stop-color="rgb(145.6,145.6,145.6)"/><stop offset="0.2377" stop-color="rgb(145.2,145.2,145.2)"/><stop offset="0.2391" stop-color="rgb(144.2,144.2,144.2)"/><stop offset="0.2404" stop-color="rgb(143.6,143.6,143.6)"/><stop offset="0.2418" stop-color="rgb(143.6,143.6,143.6)"/><stop offset="0.2431" stop-color="rgb(144.2,144.2,144.2)"/><stop offset="0.2444" stop-color="rgb(145.7,145.7,145.7)"/><stop offset="0.2458" stop-color="rgb(148.3,148.3,148.3)"/><stop offset="0.2471" stop-color="rgb(150.5,150.5,150.5)"/><stop offset="0.2485" stop-color="rgb(150.5,150.5,150.5)"/><stop offset="0.2498" stop-color="rgb(149.2,149.2,149.2)"/><stop offset="0.2512" stop-color="rgb(147.2,147.2,147.2)"/><stop offset="0.2525" stop-color="rgb(145.6,145.6,145.6)"/><stop offset="0.2539" stop-color="rgb(144.3,144.3,144.3)"/><stop offset="0.2552" stop-color="rgb(144.0,144.0,144.0)"/><stop offset="0.2566" stop-color="rgb(145.6,145.6,145.6)"/><stop offset="0.2579" stop-color="rgb(148.0,148.0,148.0)"/><stop offset="0.2593" stop-color="rgb(149.1,149.1,149.1)"/><stop offset="0.2606" stop-color="rgb(148.2,148.2,148.2)"/><stop offset="0.2620" stop-color="rgb(145.0,145.0,145.0)"/><stop offset="0.2633" stop-color="rgb(140.4,140.4,140.4)"/><stop offset="0.2646" stop-color="rgb(136.8,136.8,136.8)"/><stop offset="0.2660" stop-color="rgb(136.7,136.7,136.7)"/><stop offset="0.2673" stop-color="rgb(140.0,140.0,140.0)"/><stop offset="0.2687" stop-color="rgb(143.8,143.8,143.8)"/><stop offset="0.2700" stop-color="rgb(145.8,145.8,145.8)"/><stop offset="0.2714" stop-color="rgb(146.1,146.1,146.1)"/><stop offset="0.2727" stop-color="rgb(145.5,145.5,145.5)"/><stop offset="0.2741" stop-color="rgb(144.0,144.0,144.0)"/><stop offset="0.2754" stop-color="rgb(142.3,142.3,142.3)"/><stop offset="0.2768" stop-color="rgb(142.8,142.8,142.8)"/><stop offset="0.2781" stop-color="rgb(145.1,145.1,145.1)"/><stop offset="0.2795" stop-color="rgb(147.8,147.8,147.8)"/><stop offset="0.2808" stop-color="rgb(150.3,150.3,150.3)"/><stop offset="0.2822" stop-color="rgb(150.5,150.5,150.5)"/><stop offset="0.2835" stop-color="rgb(150.5,150.5,150.5)"/><stop offset="0.2848" stop-color="rgb(150.5,150.5,150.5)"/><stop offset="0.2862" stop-color="rgb(148.6,148.6,148.6)"/><stop offset="0.2875" stop-color="rgb(146.9,146.9,146.9)"/><stop offset="0.2889" stop-color="rgb(146.5,146.5,146.5)"/><stop offset="0.2902" stop-color="rgb(147.9,147.9,147.9)"/><stop offset="0.2916" stop-color="rgb(150.1,150.1,150.1)"/><stop offset="0.2929" stop-color="rgb(150.5,150.5,150.5)"/><stop offset="0.2943" stop-color="rgb(150.5,150.5,150.5)"/><stop offset="0.2956" stop-color="rgb(150.4,150.4,150.4)"/><stop offset="0.2970" stop-color="rgb(146.8,146.8,146.8)"/><stop offset="0.2983" stop-color="rgb(142.5,142.5,142.5)"/><stop offset="0.2997" stop-color="rgb(138.8,138.8,138.8)"/><stop offset="0.3010" stop-color="rgb(137.3,137.3,137.3)"/><stop offset="0.3024" stop-color="rgb(138.5,138.5,138.5)"/><stop offset="0.3037" stop-color="rgb(141.2,141.2,141.2)"/><stop offset="0.3051" stop-color="rgb(143.5,143.5,143.5)"/><stop offset="0.3064" stop-color="rgb(145.0,145.0,145.0)"/><stop offset="0.3077" stop-color="rgb(145.3,145.3,145.3)"/><stop offset="0.3091" stop-color="rgb(144.4,144.4,144.4)"/><stop offset="0.3104" stop-color="rgb(142.2,142.2,142.2)"/><stop offset="0.3118" stop-color="rgb(140.1,140.1,140.1)"/><stop offset="0.3131" stop-color="rgb(140.2,140.2,140.2)"/><stop offset="0.3145" stop-color="rgb(143.4,143.4,143.4)"/><stop offset="0.3158" stop-color="rgb(147.1,147.1,147.1)"/><stop offset="0.3172" stop-color="rgb(149.3,149.3,149.3)"/><stop offset="0.3185" stop-color="rgb(149.5,149.5,149.5)"/><stop offset="0.3199" stop-color="rgb(148.2,148.2,148.2)"/><stop offset="0.3212" stop-color="rgb(145.7,145.7,145.7)"/><stop offset="0.3226" stop-color="rgb(143.4,143.4,143.4)"/><stop offset="0.3239" stop-color="rgb(143.3,143.3,143.3)"/><stop offset="0.3253" stop-color="rgb(145.6,145.6,145.6)"/><stop offset="0.3266" stop-color="rgb(148.2,148.2,148.2)"/><stop offset="0.3279" stop-color="rgb(149.5,149.5,149.5)"/><stop offset="0.3293" stop-color="rgb(148.5,148.5,148.5)"/><stop offset="0.3306" stop-color="rgb(145.2,145.2,145.2)"/><stop offset="0.3320" stop-color="rgb(140.9,140.9,140.9)"/><stop offset="0.3333" stop-color="rgb(137.7,137.7,137.7)"/><stop offset="0.3347" stop-color="rgb(137.2,137.2,137.2)"/><stop offset="0.3360" stop-color="rgb(139.2,139.2,139.2)"/><stop offset="0.3374" stop-color="rgb(142.2,142.2,142.2)"/><stop offset="0.3387" stop-color="rgb(144.7,144.7,144.7)"/><stop offset="0.3401" stop-color="rgb(146.1,146.1,146.1)"/><stop offset="0.3414" stop-color="rgb(145.6,145.6,145.6)"/><stop offset="0.3428" stop-color="rgb(143.2,143.2,143.2)"/><stop offset="0.3441" stop-color="rgb(140.2,140.2,140.2)"/><stop offset="0.3455" stop-color="rgb(138.4,138.4,138.4)"/><stop offset="0.3468" stop-color="rgb(139.3,139.3,139.3)"/><stop offset="0.3481" stop-color="rgb(142.2,142.2,142.2)"/><stop offset="0.3495" stop-color="rgb(146.2,146.2,146.2)"/><stop offset="0.3508" stop-color="rgb(149.3,149.3,149.3)"/><stop offset="0.3522" stop-color="rgb(149.9,149.9,149.9)"/><stop offset="0.3535" stop-color="rgb(148.5,148.5,148.5)"/><stop offset="0.3549" stop-color="rgb(146.7,146.7,146.7)"/><stop offset="0.3562" stop-color="rgb(145.0,145.0,145.0)"/><stop offset="0.3576" stop-color="rgb(144.6,144.6,144.6)"/><stop offset="0.3589" stop-color="rgb(145.6,145.6,145.6)"/><stop offset="0.3603" stop-color="rgb(147.1,147.1,147.1)"/><stop offset="0.3616" stop-color="rgb(148.4,148.4,148.4)"/><stop offset="0.3630" stop-color="rgb(148.5,148.5,148.5)"/><stop offset="0.3643" stop-color="rgb(146.7,146.7,146.7)"/><stop offset="0.3657" stop-color="rgb(143.7,143.7,143.7)"/><stop offset="0.3670" stop-color="rgb(140.6,140.6,140.6)"/><stop offset="0.3684" stop-color="rgb(138.1,138.1,138.1)"/><stop offset="0.3697" stop-color="rgb(137.3,137.3,137.3)"/><stop offset="0.3710" stop-color="rgb(138.6,138.6,138.6)"/><stop offset="0.3724" stop-color="rgb(140.7,140.7,140.7)"/><stop offset="0.3737" stop-color="rgb(142.7,142.7,142.7)"/><stop offset="0.3751" stop-color="rgb(143.8,143.8,143.8)"/><stop offset="0.3764" stop-color="rgb(143.2,143.2,143.2)"/><stop offset="0.3778" stop-color="rgb(140.8,140.8,140.8)"/><stop offset="0.3791" stop-color="rgb(138.0,138.0,138.0)"/><stop offset="0.3805" stop-color="rgb(137.3,137.3,137.3)"/><stop offset="0.3818" stop-color="rgb(139.9,139.9,139.9)"/><stop offset="0.3832" stop-color="rgb(143.6,143.6,143.6)"/><stop offset="0.3845" stop-color="rgb(146.7,146.7,146.7)"/><stop offset="0.3859" stop-color="rgb(148.9,148.9,148.9)"/><stop offset="0.3872" stop-color="rgb(149.9,149.9,149.9)"/><stop offset="0.3886" stop-color="rgb(148.8,148.8,148.8)"/><stop offset="0.3899" stop-color="rgb(146.0,146.0,146.0)"/><stop offset="0.3912" stop-color="rgb(143.2,143.2,143.2)"/><stop offset="0.3926" stop-color="rgb(142.2,142.2,142.2)"/><stop offset="0.3939" stop-color="rgb(143.2,143.2,143.2)"/><stop offset="0.3953" stop-color="rgb(144.8,144.8,144.8)"/><stop offset="0.3966" stop-color="rgb(146.2,146.2,146.2)"/><stop offset="0.3980" stop-color="rgb(146.7,146.7,146.7)"/><stop offset="0.3993" stop-color="rgb(145.6,145.6,145.6)"/><stop offset="0.4007" stop-color="rgb(142.8,142.8,142.8)"/><stop offset="0.4020" stop-color="rgb(138.7,138.7,138.7)"/><stop offset="0.4034" stop-color="rgb(135.5,135.5,135.5)"/><stop offset="0.4047" stop-color="rgb(136.0,136.0,136.0)"/><stop offset="0.4061" stop-color="rgb(139.2,139.2,139.2)"/><stop offset="0.4074" stop-color="rgb(142.1,142.1,142.1)"/><stop offset="0.4088" stop-color="rgb(143.5,143.5,143.5)"/><stop offset="0.4101" stop-color="rgb(143.5,143.5,143.5)"/><stop offset="0.4114" stop-color="rgb(142.2,142.2,142.2)"/><stop offset="0.4128" stop-color="rgb(139.5,139.5,139.5)"/><stop offset="0.4141" stop-color="rgb(136.3,136.3,136.3)"/><stop offset="0.4155" stop-color="rgb(134.6,134.6,134.6)"/><stop offset="0.4168" stop-color="rgb(136.2,136.2,136.2)"/><stop offset="0.4182" stop-color="rgb(140.2,140.2,140.2)"/><stop offset="0.4195" stop-color="rgb(144.0,144.0,144.0)"/><stop offset="0.4209" stop-color="rgb(145.9,145.9,145.9)"/><stop offset="0.4222" stop-color="rgb(146.4,146.4,146.4)"/><stop offset="0.4236" stop-color="rgb(145.6,145.6,145.6)"/><stop offset="0.4249" stop-color="rgb(143.6,143.6,143.6)"/><stop offset="0.4263" stop-color="rgb(141.4,141.4,141.4)"/><stop offset="0.4276" stop-color="rgb(140.9,140.9,140.9)"/><stop offset="0.4290" stop-color="rgb(142.8,142.8,142.8)"/><stop offset="0.4303" stop-color="rgb(145.1,145.1,145.1)"/><stop offset="0.4316" stop-color="rgb(146.0,146.0,146.0)"/><stop offset="0.4330" stop-color="rgb(145.0,145.0,145.0)"/><stop offset="0.4343" stop-color="rgb(142.3,142.3,142.3)"/><stop offset="0.4357" stop-color="rgb(138.6,138.6,138.6)"/><stop offset="0.4370" stop-color="rgb(134.9,134.9,134.9)"/><stop offset="0.4384" stop-color="rgb(133.1,133.1,133.1)"/><stop offset="0.4397" stop-color="rgb(134.2,134.2,134.2)"/><stop offset="0.4411" stop-color="rgb(137.0,137.0,137.0)"/><stop offset="0.4424" stop-color="rgb(139.7,139.7,139.7)"/><stop offset="0.4438" stop-color="rgb(141.0,141.0,141.0)"/><stop offset="0.4451" stop-color="rgb(140.1,140.1,140.1)"/><stop offset="0.4465" stop-color="rgb(137.8,137.8,137.8)"/><stop offset="0.4478" stop-color="rgb(134.9,134.9,134.9)"/><stop offset="0.4492" stop-color="rgb(132.2,132.2,132.2)"/><stop offset="0.4505" stop-color="rgb(132.1,132.1,132.1)"/><stop offset="0.4519" stop-color="rgb(135.3,135.3,135.3)"/><stop offset="0.4532" stop-color="rgb(139.6,139.6,139.6)"/><stop offset="0.4545" stop-color="rgb(143.2,143.2,143.2)"/><stop offset="0.4559" stop-color="rgb(145.1,145.1,145.1)"/><stop offset="0.4572" stop-color="rgb(145.1,145.1,145.1)"/><stop offset="0.4586" stop-color="rgb(143.7,143.7,143.7)"/><stop offset="0.4599" stop-color="rgb(141.9,141.9,141.9)"/><stop offset="0.4613" stop-color="rgb(140.5,140.5,140.5)"/><stop offset="0.4626" stop-color="rgb(141.1,141.1,141.1)"/><stop offset="0.4640" stop-color="rgb(143.2,143.2,143.2)"/><stop offset="0.4653" stop-color="rgb(144.6,144.6,144.6)"/><stop offset="0.4667" stop-color="rgb(144.6,144.6,144.6)"/><stop offset="0.4680" stop-color="rgb(142.8,142.8,142.8)"/><stop offset="0.4694" stop-color="rgb(139.4,139.4,139.4)"/><stop offset="0.4707" stop-color="rgb(135.8,135.8,135.8)"/><stop offset="0.4721" stop-color="rgb(133.4,133.4,133.4)"/><stop offset="0.4734" stop-color="rgb(133.9,133.9,133.9)"/><stop offset="0.4747" stop-color="rgb(136.6,136.6,136.6)"/><stop offset="0.4761" stop-color="rgb(139.1,139.1,139.1)"/><stop offset="0.4774" stop-color="rgb(140.1,140.1,140.1)"/><stop offset="0.4788" stop-color="rgb(139.8,139.8,139.8)"/><stop offset="0.4801" stop-color="rgb(138.7,138.7,138.7)"/><stop offset="0.4815" stop-color="rgb(136.5,136.5,136.5)"/><stop offset="0.4828" stop-color="rgb(133.6,133.6,133.6)"/><stop offset="0.4842" stop-color="rgb(131.9,131.9,131.9)"/><stop offset="0.4855" stop-color="rgb(134.0,134.0,134.0)"/><stop offset="0.4869" stop-color="rgb(138.4,138.4,138.4)"/><stop offset="0.4882" stop-color="rgb(141.2,141.2,141.2)"/><stop offset="0.4896" stop-color="rgb(142.1,142.1,142.1)"/><stop offset="0.4909" stop-color="rgb(142.2,142.2,142.2)"/><stop offset="0.4923" stop-color="rgb(141.9,141.9,141.9)"/><stop offset="0.4936" stop-color="rgb(140.6,140.6,140.6)"/><stop offset="0.4949" stop-color="rgb(138.4,138.4,138.4)"/><stop offset="0.4963" stop-color="rgb(136.9,136.9,136.9)"/><stop offset="0.4976" stop-color="rgb(138.8,138.8,138.8)"/><stop offset="0.4990" stop-color="rgb(142.8,142.8,142.8)"/><stop offset="0.5003" stop-color="rgb(145.4,145.4,145.4)"/><stop offset="0.5017" stop-color="rgb(145.6,145.6,145.6)"/><stop offset="0.5030" stop-color="rgb(143.6,143.6,143.6)"/><stop offset="0.5044" stop-color="rgb(139.6,139.6,139.6)"/><stop offset="0.5057" stop-color="rgb(135.2,135.2,135.2)"/><stop offset="0.5071" stop-color="rgb(133.2,133.2,133.2)"/><stop offset="0.5084" stop-color="rgb(135.0,135.0,135.0)"/><stop offset="0.5098" stop-color="rgb(138.2,138.2,138.2)"/><stop offset="0.5111" stop-color="rgb(139.7,139.7,139.7)"/><stop offset="0.5125" stop-color="rgb(139.5,139.5,139.5)"/><stop offset="0.5138" stop-color="rgb(138.0,138.0,138.0)"/><stop offset="0.5152" stop-color="rgb(135.1,135.1,135.1)"/><stop offset="0.5165" stop-color="rgb(131.7,131.7,131.7)"/><stop offset="0.5178" stop-color="rgb(129.1,129.1,129.1)"/><stop offset="0.5192" stop-color="rgb(129.2,129.2,129.2)"/><stop offset="0.5205" stop-color="rgb(132.2,132.2,132.2)"/><stop offset="0.5219" stop-color="rgb(136.4,136.4,136.4)"/><stop offset="0.5232" stop-color="rgb(140.2,140.2,140.2)"/><stop offset="0.5246" stop-color="rgb(142.4,142.4,142.4)"/><stop offset="0.5259" stop-color="rgb(142.5,142.5,142.5)"/><stop offset="0.5273" stop-color="rgb(141.3,141.3,141.3)"/><stop offset="0.5286" stop-color="rgb(139.3,139.3,139.3)"/><stop offset="0.5300" stop-color="rgb(138.2,138.2,138.2)"/><stop offset="0.5313" stop-color="rgb(139.9,139.9,139.9)"/><stop offset="0.5327" stop-color="rgb(143.1,143.1,143.1)"/><stop offset="0.5340" stop-color="rgb(146.0,146.0,146.0)"/><stop offset="0.5354" stop-color="rgb(147.0,147.0,147.0)"/><stop offset="0.5367" stop-color="rgb(145.8,145.8,145.8)"/><stop offset="0.5380" stop-color="rgb(142.7,142.7,142.7)"/><stop offset="0.5394" stop-color="rgb(138.6,138.6,138.6)"/><stop offset="0.5407" stop-color="rgb(135.3,135.3,135.3)"/><stop offset="0.5421" stop-color="rgb(135.2,135.2,135.2)"/><stop offset="0.5434" stop-color="rgb(138.2,138.2,138.2)"/><stop offset="0.5448" stop-color="rgb(141.5,141.5,141.5)"/><stop offset="0.5461" stop-color="rgb(143.3,143.3,143.3)"/><stop offset="0.5475" stop-color="rgb(143.2,143.2,143.2)"/><stop offset="0.5488" stop-color="rgb(141.2,141.2,141.2)"/><stop offset="0.5502" stop-color="rgb(138.1,138.1,138.1)"/><stop offset="0.5515" stop-color="rgb(134.9,134.9,134.9)"/><stop offset="0.5529" stop-color="rgb(133.1,133.1,133.1)"/><stop offset="0.5542" stop-color="rgb(134.0,134.0,134.0)"/><stop offset="0.5556" stop-color="rgb(137.2,137.2,137.2)"/><stop offset="0.5569" stop-color="rgb(140.8,140.8,140.8)"/><stop offset="0.5582" stop-color="rgb(143.5,143.5,143.5)"/><stop offset="0.5596" stop-color="rgb(144.6,144.6,144.6)"/><stop offset="0.5609" stop-color="rgb(143.9,143.9,143.9)"/><stop offset="0.5623" stop-color="rgb(142.0,142.0,142.0)"/><stop offset="0.5636" stop-color="rgb(140.1,140.1,140.1)"/><stop offset="0.5650" stop-color="rgb(139.4,139.4,139.4)"/><stop offset="0.5663" stop-color="rgb(140.1,140.1,140.1)"/><stop offset="0.5677" stop-color="rgb(141.6,141.6,141.6)"/><stop offset="0.5690" stop-color="rgb(143.6,143.6,143.6)"/><stop offset="0.5704" stop-color="rgb(144.9,144.9,144.9)"/><stop offset="0.5717" stop-color="rgb(143.7,143.7,143.7)"/><stop offset="0.5731" stop-color="rgb(140.3,140.3,140.3)"/><stop offset="0.5744" stop-color="rgb(137.0,137.0,137.0)"/><stop offset="0.5758" stop-color="rgb(135.1,135.1,135.1)"/><stop offset="0.5771" stop-color="rgb(134.9,134.9,134.9)"/><stop offset="0.5785" stop-color="rgb(136.8,136.8,136.8)"/><stop offset="0.5798" stop-color="rgb(139.5,139.5,139.5)"/><stop offset="0.5811" stop-color="rgb(140.7,140.7,140.7)"/><stop offset="0.5825" stop-color="rgb(139.9,139.9,139.9)"/><stop offset="0.5838" stop-color="rgb(138.0,138.0,138.0)"/><stop offset="0.5852" stop-color="rgb(135.9,135.9,135.9)"/><stop offset="0.5865" stop-color="rgb(134.2,134.2,134.2)"/><stop offset="0.5879" stop-color="rgb(134.0,134.0,134.0)"/><stop offset="0.5892" stop-color="rgb(136.1,136.1,136.1)"/><stop offset="0.5906" stop-color="rgb(139.3,139.3,139.3)"/><stop offset="0.5919" stop-color="rgb(142.2,142.2,142.2)"/><stop offset="0.5933" stop-color="rgb(143.8,143.8,143.8)"/><stop offset="0.5946" stop-color="rgb(143.7,143.7,143.7)"/><stop offset="0.5960" stop-color="rgb(142.1,142.1,142.1)"/><stop offset="0.5973" stop-color="rgb(139.6,139.6,139.6)"/><stop offset="0.5987" stop-color="rgb(137.6,137.6,137.6)"/><stop offset="0.6000" stop-color="rgb(138.2,138.2,138.2)"/><stop offset="0.6013" stop-color="rgb(141.3,141.3,141.3)"/><stop offset="0.6027" stop-color="rgb(144.5,144.5,144.5)"/><stop offset="0.6040" stop-color="rgb(146.2,146.2,146.2)"/><stop offset="0.6054" stop-color="rgb(145.9,145.9,145.9)"/><stop offset="0.6067" stop-color="rgb(143.9,143.9,143.9)"/><stop offset="0.6081" stop-color="rgb(140.7,140.7,140.7)"/><stop offset="0.6094" stop-color="rgb(137.7,137.7,137.7)"/><stop offset="0.6108" stop-color="rgb(136.5,136.5,136.5)"/><stop offset="0.6121" stop-color="rgb(137.3,137.3,137.3)"/><stop offset="0.6135" stop-color="rgb(138.9,138.9,138.9)"/><stop offset="0.6148" stop-color="rgb(140.4,140.4,140.4)"/><stop offset="0.6162" stop-color="rgb(141.2,141.2,141.2)"/><stop offset="0.6175" stop-color="rgb(139.9,139.9,139.9)"/><stop offset="0.6189" stop-color="rgb(136.8,136.8,136.8)"/><stop offset="0.6202" stop-color="rgb(133.8,133.8,133.8)"/><stop offset="0.6215" stop-color="rgb(133.1,133.1,133.1)"/><stop offset="0.6229" stop-color="rgb(135.1,135.1,135.1)"/><stop offset="0.6242" stop-color="rgb(138.3,138.3,138.3)"/><stop offset="0.6256" stop-color="rgb(141.4,141.4,141.4)"/><stop offset="0.6269" stop-color="rgb(143.5,143.5,143.5)"/><stop offset="0.6283" stop-color="rgb(143.8,143.8,143.8)"/><stop offset="0.6296" stop-color="rgb(143.0,143.0,143.0)"/><stop offset="0.6310" stop-color="rgb(141.5,141.5,141.5)"/><stop offset="0.6323" stop-color="rgb(139.1,139.1,139.1)"/><stop offset="0.6337" stop-color="rgb(137.1,137.1,137.1)"/><stop offset="0.6350" stop-color="rgb(137.6,137.6,137.6)"/><stop offset="0.6364" stop-color="rgb(140.5,140.5,140.5)"/><stop offset="0.6377" stop-color="rgb(143.9,143.9,143.9)"/><stop offset="0.6391" stop-color="rgb(146.1,146.1,146.1)"/><stop offset="0.6404" stop-color="rgb(146.1,146.1,146.1)"/><stop offset="0.6418" stop-color="rgb(144.1,144.1,144.1)"/><stop offset="0.6431" stop-color="rgb(141.0,141.0,141.0)"/><stop offset="0.6444" stop-color="rgb(137.5,137.5,137.5)"/><stop offset="0.6458" stop-color="rgb(135.3,135.3,135.3)"/><stop offset="0.6471" stop-color="rgb(135.3,135.3,135.3)"/><stop offset="0.6485" stop-color="rgb(136.6,136.6,136.6)"/><stop offset="0.6498" stop-color="rgb(138.2,138.2,138.2)"/><stop offset="0.6512" stop-color="rgb(138.9,138.9,138.9)"/><stop offset="0.6525" stop-color="rgb(138.0,138.0,138.0)"/><stop offset="0.6539" stop-color="rgb(135.7,135.7,135.7)"/><stop offset="0.6552" stop-color="rgb(133.1,133.1,133.1)"/><stop offset="0.6566" stop-color="rgb(131.6,131.6,131.6)"/><stop offset="0.6579" stop-color="rgb(132.4,132.4,132.4)"/><stop offset="0.6593" stop-color="rgb(135.1,135.1,135.1)"/><stop offset="0.6606" stop-color="rgb(138.4,138.4,138.4)"/><stop offset="0.6620" stop-color="rgb(141.3,141.3,141.3)"/><stop offset="0.6633" stop-color="rgb(142.7,142.7,142.7)"/><stop offset="0.6646" stop-color="rgb(141.6,141.6,141.6)"/><stop offset="0.6660" stop-color="rgb(139.3,139.3,139.3)"/><stop offset="0.6673" stop-color="rgb(137.8,137.8,137.8)"/><stop offset="0.6687" stop-color="rgb(138.4,138.4,138.4)"/><stop offset="0.6700" stop-color="rgb(140.5,140.5,140.5)"/><stop offset="0.6714" stop-color="rgb(143.0,143.0,143.0)"/><stop offset="0.6727" stop-color="rgb(144.9,144.9,144.9)"/><stop offset="0.6741" stop-color="rgb(145.1,145.1,145.1)"/><stop offset="0.6754" stop-color="rgb(143.5,143.5,143.5)"/><stop offset="0.6768" stop-color="rgb(141.4,141.4,141.4)"/><stop offset="0.6781" stop-color="rgb(139.3,139.3,139.3)"/><stop offset="0.6795" stop-color="rgb(137.8,137.8,137.8)"/><stop offset="0.6808" stop-color="rgb(137.6,137.6,137.6)"/><stop offset="0.6822" stop-color="rgb(138.6,138.6,138.6)"/><stop offset="0.6835" stop-color="rgb(139.7,139.7,139.7)"/><stop offset="0.6848" stop-color="rgb(139.9,139.9,139.9)"/><stop offset="0.6862" stop-color="rgb(138.2,138.2,138.2)"/><stop offset="0.6875" stop-color="rgb(135.2,135.2,135.2)"/><stop offset="0.6889" stop-color="rgb(131.9,131.9,131.9)"/><stop offset="0.6902" stop-color="rgb(129.1,129.1,129.1)"/><stop offset="0.6916" stop-color="rgb(128.6,128.6,128.6)"/><stop offset="0.6929" stop-color="rgb(131.5,131.5,131.5)"/><stop offset="0.6943" stop-color="rgb(136.4,136.4,136.4)"/><stop offset="0.6956" stop-color="rgb(141.0,141.0,141.0)"/><stop offset="0.6970" stop-color="rgb(143.5,143.5,143.5)"/><stop offset="0.6983" stop-color="rgb(143.2,143.2,143.2)"/><stop offset="0.6997" stop-color="rgb(141.4,141.4,141.4)"/><stop offset="0.7010" stop-color="rgb(139.5,139.5,139.5)"/><stop offset="0.7024" stop-color="rgb(138.0,138.0,138.0)"/><stop offset="0.7037" stop-color="rgb(138.1,138.1,138.1)"/><stop offset="0.7051" stop-color="rgb(139.7,139.7,139.7)"/><stop offset="0.7064" stop-color="rgb(142.0,142.0,142.0)"/><stop offset="0.7077" stop-color="rgb(143.6,143.6,143.6)"/><stop offset="0.7091" stop-color="rgb(143.5,143.5,143.5)"/><stop offset="0.7104" stop-color="rgb(142.0,142.0,142.0)"/><stop offset="0.7118" stop-color="rgb(139.9,139.9,139.9)"/><stop offset="0.7131" stop-color="rgb(138.0,138.0,138.0)"/><stop offset="0.7145" stop-color="rgb(136.8,136.8,136.8)"/><stop offset="0.7158" stop-color="rgb(137.1,137.1,137.1)"/><stop offset="0.7172" stop-color="rgb(138.6,138.6,138.6)"/><stop offset="0.7185" stop-color="rgb(140.2,140.2,140.2)"/><stop offset="0.7199" stop-color="rgb(140.2,140.2,140.2)"/><stop offset="0.7212" stop-color="rgb(137.8,137.8,137.8)"/><stop offset="0.7226" stop-color="rgb(133.8,133.8,133.8)"/><stop offset="0.7239" stop-color="rgb(129.8,129.8,129.8)"/><stop offset="0.7253" stop-color="rgb(127.1,127.1,127.1)"/><stop offset="0.7266" stop-color="rgb(127.3,127.3,127.3)"/><stop offset="0.7279" stop-color="rgb(130.0,130.0,130.0)"/><stop offset="0.7293" stop-color="rgb(133.6,133.6,133.6)"/><stop offset="0.7306" stop-color="rgb(137.0,137.0,137.0)"/><stop offset="0.7320" stop-color="rgb(139.3,139.3,139.3)"/><stop offset="0.7333" stop-color="rgb(139.5,139.5,139.5)"/><stop offset="0.7347" stop-color="rgb(138.1,138.1,138.1)"/><stop offset="0.7360" stop-color="rgb(136.3,136.3,136.3)"/><stop offset="0.7374" stop-color="rgb(134.9,134.9,134.9)"/><stop offset="0.7387" stop-color="rgb(135.4,135.4,135.4)"/><stop offset="0.7401" stop-color="rgb(139.1,139.1,139.1)"/><stop offset="0.7414" stop-color="rgb(143.7,143.7,143.7)"/><stop offset="0.7428" stop-color="rgb(145.6,145.6,145.6)"/><stop offset="0.7441" stop-color="rgb(144.7,144.7,144.7)"/><stop offset="0.7455" stop-color="rgb(142.4,142.4,142.4)"/><stop offset="0.7468" stop-color="rgb(139.4,139.4,139.4)"/><stop offset="0.7481" stop-color="rgb(136.9,136.9,136.9)"/><stop offset="0.7495" stop-color="rgb(136.3,136.3,136.3)"/><stop offset="0.7508" stop-color="rgb(137.6,137.6,137.6)"/><stop offset="0.7522" stop-color="rgb(139.4,139.4,139.4)"/><stop offset="0.7535" stop-color="rgb(140.3,140.3,140.3)"/><stop offset="0.7549" stop-color="rgb(139.7,139.7,139.7)"/><stop offset="0.7562" stop-color="rgb(137.9,137.9,137.9)"/><stop offset="0.7576" stop-color="rgb(134.6,134.6,134.6)"/><stop offset="0.7589" stop-color="rgb(130.2,130.2,130.2)"/><stop offset="0.7603" stop-color="rgb(127.1,127.1,127.1)"/><stop offset="0.7616" stop-color="rgb(127.8,127.8,127.8)"/><stop offset="0.7630" stop-color="rgb(131.9,131.9,131.9)"/><stop offset="0.7643" stop-color="rgb(136.6,136.6,136.6)"/><stop offset="0.7657" stop-color="rgb(139.9,139.9,139.9)"/><stop offset="0.7670" stop-color="rgb(140.9,140.9,140.9)"/><stop offset="0.7684" stop-color="rgb(139.1,139.1,139.1)"/><stop offset="0.7697" stop-color="rgb(135.6,135.6,135.6)"/><stop offset="0.7710" stop-color="rgb(132.8,132.8,132.8)"/><stop offset="0.7724" stop-color="rgb(132.6,132.6,132.6)"/><stop offset="0.7737" stop-color="rgb(134.8,134.8,134.8)"/><stop offset="0.7751" stop-color="rgb(138.0,138.0,138.0)"/><stop offset="0.7764" stop-color="rgb(141.6,141.6,141.6)"/><stop offset="0.7778" stop-color="rgb(144.0,144.0,144.0)"/><stop offset="0.7791" stop-color="rgb(143.5,143.5,143.5)"/><stop offset="0.7805" stop-color="rgb(140.9,140.9,140.9)"/><stop offset="0.7818" stop-color="rgb(137.9,137.9,137.9)"/><stop offset="0.7832" stop-color="rgb(135.7,135.7,135.7)"/><stop offset="0.7845" stop-color="rgb(135.6,135.6,135.6)"/><stop offset="0.7859" stop-color="rgb(137.3,137.3,137.3)"/><stop offset="0.7872" stop-color="rgb(139.3,139.3,139.3)"/><stop offset="0.7886" stop-color="rgb(140.2,140.2,140.2)"/><stop offset="0.7899" stop-color="rgb(139.6,139.6,139.6)"/><stop offset="0.7912" stop-color="rgb(137.9,137.9,137.9)"/><stop offset="0.7926" stop-color="rgb(135.0,135.0,135.0)"/><stop offset="0.7939" stop-color="rgb(131.5,131.5,131.5)"/><stop offset="0.7953" stop-color="rgb(129.6,129.6,129.6)"/><stop offset="0.7966" stop-color="rgb(130.5,130.5,130.5)"/><stop offset="0.7980" stop-color="rgb(133.4,133.4,133.4)"/><stop offset="0.7993" stop-color="rgb(136.4,136.4,136.4)"/><stop offset="0.8007" stop-color="rgb(138.5,138.5,138.5)"/><stop offset="0.8020" stop-color="rgb(139.0,139.0,139.0)"/><stop offset="0.8034" stop-color="rgb(138.2,138.2,138.2)"/><stop offset="0.8047" stop-color="rgb(136.4,136.4,136.4)"/><stop offset="0.8061" stop-color="rgb(134.9,134.9,134.9)"/><stop offset="0.8074" stop-color="rgb(135.2,135.2,135.2)"/><stop offset="0.8088" stop-color="rgb(137.4,137.4,137.4)"/><stop offset="0.8101" stop-color="rgb(140.2,140.2,140.2)"/><stop offset="0.8114" stop-color="rgb(142.6,142.6,142.6)"/><stop offset="0.8128" stop-color="rgb(143.2,143.2,143.2)"/><stop offset="0.8141" stop-color="rgb(141.7,141.7,141.7)"/><stop offset="0.8155" stop-color="rgb(139.0,139.0,139.0)"/><stop offset="0.8168" stop-color="rgb(136.3,136.3,136.3)"/><stop offset="0.8182" stop-color="rgb(134.9,134.9,134.9)"/><stop offset="0.8195" stop-color="rgb(135.9,135.9,135.9)"/><stop offset="0.8209" stop-color="rgb(138.3,138.3,138.3)"/><stop offset="0.8222" stop-color="rgb(139.5,139.5,139.5)"/><stop offset="0.8236" stop-color="rgb(139.1,139.1,139.1)"/><stop offset="0.8249" stop-color="rgb(137.4,137.4,137.4)"/><stop offset="0.8263" stop-color="rgb(134.1,134.1,134.1)"/><stop offset="0.8276" stop-color="rgb(129.7,129.7,129.7)"/><stop offset="0.8290" stop-color="rgb(125.7,125.7,125.7)"/><stop offset="0.8303" stop-color="rgb(124.5,124.5,124.5)"/><stop offset="0.8316" stop-color="rgb(127.5,127.5,127.5)"/><stop offset="0.8330" stop-color="rgb(132.6,132.6,132.6)"/><stop offset="0.8343" stop-color="rgb(136.9,136.9,136.9)"/><stop offset="0.8357" stop-color="rgb(139.4,139.4,139.4)"/><stop offset="0.8370" stop-color="rgb(139.9,139.9,139.9)"/><stop offset="0.8384" stop-color="rgb(138.5,138.5,138.5)"/><stop offset="0.8397" stop-color="rgb(136.9,136.9,136.9)"/><stop offset="0.8411" stop-color="rgb(136.5,136.5,136.5)"/><stop offset="0.8411" stop-color="rgb(103.0,103.0,103.0)"/><stop offset="1.0000" stop-color="rgb(103.0,103.0,103.0)"/></linearGradient><filter id="wff" x="0" y="0" width="1" height="1" filterUnits="objectBoundingBox" color-interpolation-filters="sRGB"><feTurbulence type="fractalNoise" baseFrequency="0.83" numOctaves="2" seed="3" result="n"/><feColorMatrix in="n" type="matrix" values="1 0 0 0 0  1 0 0 0 0  1 0 0 0 0  0 0 0 0 1" result="ng"/><feComponentTransfer in="ng" result="nf"><feFuncR type="table" tableValues="0.000 0.000 0.048 0.119 0.214 0.381 0.507 0.576 0.624 0.669 0.712 0.758 0.802 0.840 0.883 0.926 0.964 0.988 1.000 1.000 1.000"/><feFuncG type="table" tableValues="0.000 0.000 0.048 0.119 0.214 0.381 0.507 0.576 0.624 0.669 0.712 0.758 0.802 0.840 0.883 0.926 0.964 0.988 1.000 1.000 1.000"/><feFuncB type="table" tableValues="0.000 0.000 0.048 0.119 0.214 0.381 0.507 0.576 0.624 0.669 0.712 0.758 0.802 0.840 0.883 0.926 0.964 0.988 1.000 1.000 1.000"/></feComponentTransfer><feComposite in="SourceGraphic" in2="nf" operator="arithmetic" k1="0" k2="1" k3="0.16471" k4="-0.11765" result="sum"/><feComponentTransfer in="sum"><feFuncR type="table" tableValues="0.000 0.000 0.000 0.000 0.000 0.000 0.000 0.000 0.000 0.000 0.000 0.000 0.000 0.000 0.000 0.039 0.078 0.118 0.157 0.196 0.235 0.310 0.388 0.463 0.541 0.616 0.694 0.769 0.847 0.922 1.000 1.000 1.000 1.000 1.000 1.000 1.000 1.000 1.000 1.000 1.000 1.000 1.000 1.000 1.000 1.000 1.000 1.000 1.000 1.000 1.000 1.000"/><feFuncG type="table" tableValues="0.000 0.000 0.000 0.000 0.000 0.000 0.000 0.000 0.000 0.000 0.000 0.000 0.000 0.000 0.000 0.078 0.161 0.243 0.325 0.408 0.490 0.541 0.592 0.643 0.694 0.745 0.796 0.847 0.898 0.949 1.000 0.953 0.902 0.851 0.800 0.753 0.702 0.651 0.600 0.553 0.502 0.451 0.400 0.353 0.302 0.251 0.200 0.153 0.102 0.051 0.000 1.000"/><feFuncB type="table" tableValues="0.000 0.000 0.000 0.000 0.000 0.055 0.110 0.165 0.220 0.275 0.329 0.384 0.439 0.494 0.549 0.624 0.698 0.773 0.847 0.922 1.000 0.902 0.800 0.702 0.600 0.502 0.400 0.302 0.200 0.102 0.000 0.000 0.000 0.000 0.000 0.000 0.000 0.000 0.000 0.000 0.000 0.000 0.000 0.000 0.000 0.000 0.000 0.000 0.000 0.000 0.000 1.000"/></feComponentTransfer></filter></defs><rect x="0" y="0" width="1485" height="440" fill="url(#wg)" filter="url(#wff)"/></svg></div>
<div id="wfline" class="abs"></div>
<!-- ===== FFT Settings dock ===== -->
<div class="t" style="left:1496px;top:93px"><span style="letter-spacing:0.22px">FFT Settings</span></div>
<svg class="dockico" style="left:1827px;top:96px" viewBox="0 0 11 11"><rect x=".5" y=".5" width="10" height="10" rx="2" fill="#f5f3f1" stroke="#6f6c68"/><rect x="4.500" y="2.500" width="4" height="4" fill="none" stroke="#55524e"/><rect x="2.500" y="4.500" width="4" height="4" fill="#f5f3f1" stroke="#55524e"/></svg>
<svg class="dockico" style="left:1841px;top:96px" viewBox="0 0 11 11"><rect x=".5" y=".5" width="10" height="10" rx="2" fill="#f5f3f1" stroke="#6f6c68"/><path d="M3 3l5 5M8 3l-5 5" stroke="#45423e" stroke-width="1.600"/></svg>

<div class="t r" style="left:1490px;width:78px;top:120px"><span style="letter-spacing:-0.6px">FFT size</span></div>
<div class="combo" style="left:1575px;top:116px">8192</div>
<div class="t" style="left:1670px;top:120px"><span style="word-spacing:-1.2px;letter-spacing:-.17px">RBW: 610.4 Hz</span></div>

<div class="t r" style="left:1490px;width:78px;top:151px"><span style="letter-spacing:-0.37px">Rate</span></div>
<div class="combo" style="left:1575px;top:147px"><span style="letter-spacing:0.22px">25 fps</span></div>
<div class="t" style="left:1670px;top:151px">Overlap: 0%</div>

<div class="t r" style="left:1490px;width:78px;top:182px">Time span</div>
<div class="combo" style="left:1575px;top:178px"><span style="letter-spacing:0.3px">Auto</span></div>
<div class="t" style="left:1670px;top:182px"><span style="word-spacing:-1px;letter-spacing:-.3px">Res: - s</span></div>

<div class="t r" style="left:1490px;width:78px;top:212px"><span style="letter-spacing:0.2px">Averaging</span></div>
<div class="groove" style="left:1576px;top:217px;width:180px"></div>
<div class="fill" style="left:1576px;top:217px;width:131px"></div>
<div class="knob" style="left:1701px;top:213px"></div>

<div class="t r" style="left:1490px;width:78px;top:240px"><span style="letter-spacing:0.2px">Pandapter</span></div>
<div class="groove" style="left:1576px;top:245px;width:180px"></div>
<div class="fill" style="left:1576px;top:245px;width:90px"></div>
<div class="knob" style="left:1660px;top:241px"></div>
<div class="t" style="left:1763px;top:240px"><span style="letter-spacing:0.61px">Waterfall</span></div>

<div class="t r" style="left:1490px;width:78px;top:270px"><span style="letter-spacing:-0.57px">Peak</span></div>
<div class="btn" style="left:1575px;top:267px;width:136px"><span style="letter-spacing:0.46px">Detect</span></div>
<div class="btn" style="left:1713px;top:267px;width:136px"><span style="letter-spacing:0.33px">Hold</span></div>

<div class="t r" style="left:1490px;width:78px;top:301px">Pand. dB</div>
<div class="groove" style="left:1576px;top:307px;width:180px"></div>
<div class="fill" style="left:1638px;top:307px;width:112px"></div>
<div class="knob" style="left:1632px;top:303px"></div>
<div class="knob" style="left:1743px;top:303px"></div>
<div class="btn" style="left:1763px;top:298px;width:86px">Lock</div>

<div class="t r" style="left:1490px;width:78px;top:328px">Wf. dB</div>
<div class="groove" style="left:1576px;top:334px;width:180px"></div>
<div class="fill" style="left:1602px;top:334px;width:148px"></div>
<div class="knob" style="left:1596px;top:330px"></div>
<div class="knob" style="left:1743px;top:330px"></div>

<div class="t r" style="left:1490px;width:78px;top:354px">Freq zoom</div>
<div class="groove" style="left:1576px;top:359px;width:180px"></div>
<div class="fill" style="left:1576px;top:359px;width:8px"></div>
<div class="knob" style="left:1579px;top:355px"></div>
<div class="t" style="left:1763px;top:354px">2x</div>

<div class="btn" style="left:1497px;top:380px;width:116px"><span style="letter-spacing:-0.38px">Reset</span></div>
<div class="btn" style="left:1615px;top:380px;width:116px">Center</div>
<div class="btn" style="left:1733px;top:380px;width:116px"><span style="letter-spacing:0.72px">Demod</span></div>

<div class="t r" style="left:1490px;width:78px;top:414px">Color</div>
<div class="abs" style="left:1592px;top:416px;width:12px;height:12px;border:1px solid #9e9a95;background:#fdfdfc;border-radius:1px"></div>
<div class="t" style="left:1607px;top:414px"><span style="letter-spacing:0.32px">White</span></div>
<div class="btn" style="left:1670px;top:411px;width:87px"><span style="letter-spacing:0.83px">Fill</span></div>

<svg class="abs" style="left:1488px;top:555px" width="3" height="18" viewBox="0 0 3 18"><g fill="#cdc9c3"><rect x="1" y="1" width="1" height="1"/><rect x="1" y="4" width="1" height="1"/><rect x="1" y="7" width="1" height="1"/><rect x="1" y="10" width="1" height="1"/><rect x="1" y="13" width="1" height="1"/><rect x="1" y="16" width="1" height="1"/></g></svg>
<!-- tabs -->
<div class="tab" style="left:1492px;top:646px;width:118px"><span style="letter-spacing:0.49px">Input contr…</span></div>
<div class="tab" style="left:1609px;top:646px;width:140px"><span style="letter-spacing:0.25px">Receiver Opti…</span></div>
<div class="tab act" style="left:1748px;top:646px;width:106px;line-height:27px">FFT Setti…</div>
<svg class="abs" style="left:1664px;top:676px" width="20" height="2" viewBox="0 0 20 2"><g fill="#c9c5bf"><rect x="1" width="1" height="1"/><rect x="4" width="1" height="1"/><rect x="7" width="1" height="1"/><rect x="10" width="1" height="1"/><rect x="13" width="1" height="1"/><rect x="16" width="1" height="1"/></g></svg>

<!-- ===== Audio dock ===== -->
<div class="t" style="left:1496px;top:681px"><span style="letter-spacing:0.22px">Audio</span></div>
<svg class="dockico" style="left:1827px;top:684px" viewBox="0 0 11 11"><rect x=".5" y=".5" width="10" height="10" rx="2" fill="#f5f3f1" stroke="#6f6c68"/><rect x="4.500" y="2.500" width="4" height="4" fill="none" stroke="#55524e"/><rect x="2.500" y="4.500" width="4" height="4" fill="#f5f3f1" stroke="#55524e"/></svg>
<svg class="dockico" style="left:1841px;top:684px" viewBox="0 0 11 11"><rect x=".5" y=".5" width="10" height="10" rx="2" fill="#f5f3f1" stroke="#6f6c68"/><path d="M3 3l5 5M8 3l-5 5" stroke="#45423e" stroke-width="1.600"/></svg>
<svg class="abs" style="left:1501px;top:708px;background:#1f1d1e;will-change:transform" width="344" height="235" viewBox="0 0 344 235"><g stroke="#4a4849" stroke-width="1" stroke-dasharray="1 2" shape-rendering="crispEdges"><path d="M71.5 0V235"/><path d="M143.5 0V235"/><path d="M215.5 0V235"/><path d="M286.5 0V235"/><path d="M49 59.5H344"/><path d="M49 118.5H344"/><path d="M49 177.5H344"/></g><g fill="#d4d4d4" font-family="Liberation Sans,sans-serif" font-size="13.5px" letter-spacing="0.9px"><text x="37.5" y="64.9" text-anchor="end">-20</text><text x="37.5" y="123.8" text-anchor="end">-40</text><text x="37.5" y="182.7" text-anchor="end">-60</text><text x="71.8" y="227" text-anchor="middle">5</text><text x="143.6" y="227" text-anchor="middle">10</text><text x="215.4" y="227" text-anchor="middle">15</text><text x="286.6" y="227" text-anchor="middle">20</text></g><polyline fill="none" stroke="#ffffff" stroke-width="1" shape-rendering="crispEdges" points="0.5,213.9 1.5,220.6 2.5,221.0 3.5,231.3 4.5,235.0 5.5,213.0 6.5,214.3 7.5,212.8 8.5,211.5 9.5,221.9 10.5,215.7 11.5,219.9 12.5,209.2 13.5,221.8 14.5,205.7 15.5,225.9 16.5,233.9 17.5,212.5 18.5,233.1 19.5,229.6 20.5,214.7 21.5,217.3 22.5,222.3 23.5,221.9 24.5,216.1 25.5,227.2 26.5,229.2 27.5,226.5 28.5,228.8 29.5,220.6 30.5,208.8 31.5,222.1 32.5,224.2 33.5,226.6 34.5,221.6 35.5,218.0 36.5,219.9 37.5,219.7 38.5,221.5 39.5,208.6 40.5,211.3 41.5,216.0 42.5,217.3 43.5,219.3 44.5,221.7 45.5,221.9 46.5,222.2 47.5,217.8 48.5,224.9 49.5,219.8 50.5,223.7 51.5,221.4 52.5,221.5 53.5,210.0 54.5,212.6 55.5,222.7 56.5,224.8 57.5,216.1 58.5,213.8 59.5,214.9 60.5,224.6 61.5,220.1 62.5,206.1 63.5,212.8 64.5,223.4 65.5,227.0 66.5,217.6 67.5,216.6 68.5,214.8 69.5,222.7 70.5,222.8 71.5,213.6 72.5,218.5 73.5,221.9 74.5,221.1 75.5,200.7 76.5,210.9 77.5,208.5 78.5,229.8 79.5,221.3 80.5,222.7 81.5,209.1 82.5,223.7 83.5,219.3 84.5,217.3 85.5,214.2 86.5,220.5 87.5,218.0 88.5,212.5 89.5,212.5 90.5,223.4 91.5,217.4 92.5,214.8 93.5,213.8 94.5,211.8 95.5,217.3 96.5,222.9 97.5,212.4 98.5,225.9 99.5,222.0 100.5,222.0 101.5,223.1 102.5,215.8 103.5,219.5 104.5,215.7 105.5,215.1 106.5,224.1 107.5,211.5 108.5,216.5 109.5,207.9 110.5,214.8 111.5,218.6 112.5,223.8 113.5,221.1 114.5,216.8 115.5,219.4 116.5,217.9 117.5,221.5 118.5,221.7 119.5,219.4 120.5,217.6 121.5,217.6 122.5,220.7 123.5,223.9 124.5,220.5 125.5,221.4 126.5,212.7 127.5,213.7 128.5,217.5 129.5,222.3 130.5,221.1 131.5,233.8 132.5,219.5 133.5,223.7 134.5,235.0 135.5,213.2 136.5,224.9 137.5,220.5 138.5,220.6 139.5,221.1 140.5,220.2 141.5,219.8 142.5,214.1 143.5,231.4 144.5,220.9 145.5,223.2 146.5,218.3 147.5,218.9 148.5,216.1 149.5,215.9 150.5,218.5 151.5,228.2 152.5,225.9 153.5,213.8 154.5,218.7 155.5,225.6 156.5,216.8 157.5,216.9 158.5,214.3 159.5,216.8 160.5,230.4 161.5,207.3 162.5,221.6 163.5,219.9 164.5,214.2 165.5,217.5 166.5,219.6 167.5,230.8 168.5,216.5 169.5,233.0 170.5,213.4 171.5,218.1 172.5,212.1 173.5,231.9 174.5,202.2 175.5,215.3 176.5,214.7 177.5,221.1 178.5,218.2 179.5,214.3 180.5,208.5 181.5,215.7 182.5,216.7 183.5,215.0 184.5,204.7 185.5,216.2 186.5,224.7 187.5,214.4 188.5,213.8 189.5,216.8 190.5,223.9 191.5,217.8 192.5,213.1 193.5,217.6 194.5,216.2 195.5,216.0 196.5,232.2 197.5,217.6 198.5,216.1 199.5,220.5 200.5,216.6 201.5,223.7 202.5,231.8 203.5,223.9 204.5,223.7 205.5,233.7 206.5,217.8 207.5,215.8 208.5,223.9 209.5,223.4 210.5,212.0 211.5,222.4 212.5,222.5 213.5,218.6 214.5,218.9 215.5,223.3 216.5,219.6 217.5,214.4 218.5,217.8 219.5,214.7 220.5,235.0 221.5,233.5 222.5,224.8 223.5,219.4 224.5,226.4 225.5,222.3 226.5,220.5 227.5,225.9 228.5,223.9 229.5,221.4 230.5,225.7 231.5,225.6 232.5,234.2 233.5,235.0 234.5,222.0 235.5,235.0 236.5,232.6 237.5,229.2 238.5,234.2 239.5,235.0 240.5,235.0 241.5,235.0"/></svg>
<div class="t" style="left:1501px;top:952px"><span style="letter-spacing:-0.42px">Gain:</span></div>
<div class="groove" style="left:1542px;top:957px;width:246px"></div>
<div class="fill" style="left:1542px;top:957px;width:162px"></div>
<div class="knob" style="left:1697px;top:953px"></div>
<div class="t r" style="left:1781.5px;width:64px;top:952px">6.5 dB</div>
<div class="btn" style="left:1501px;top:977px;width:85px">UDP</div>
<div class="btn" style="left:1588px;top:977px;width:85px"><span style="letter-spacing:-0.4px">Rec</span></div>
<div class="btn dis" style="left:1674px;top:977px;width:85px"><span style="letter-spacing:-0.37px">Play</span></div>
<div class="btn" style="left:1760px;top:977px;width:85px">...</div>
<div class="t c" style="left:1624px;width:100px;top:1008px;font-style:italic;font-size:13px">DSP</div>
<div id="dockedge" class="abs"></div>
<div id="status" class="t">Set pandapter dB range</div>
</body></html>
